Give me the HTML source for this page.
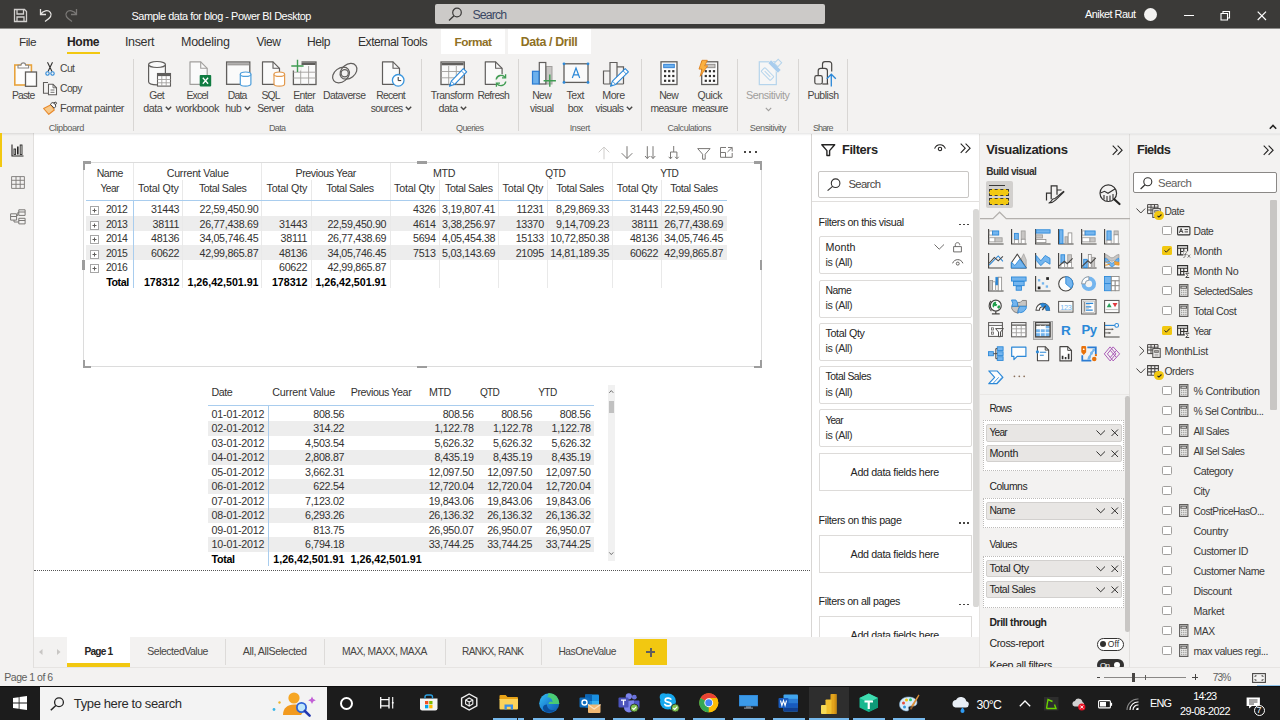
<!DOCTYPE html>
<html lang="en"><head><meta charset="utf-8"><title>Sample data for blog - Power BI Desktop</title>
<style>
html,body{margin:0;padding:0;width:1280px;height:720px;overflow:hidden;background:#fff;}
body{font-family:"Liberation Sans",sans-serif;font-size:11px;color:#252423;position:relative;}
.t{position:absolute;white-space:nowrap;line-height:20px;height:20px;}
.r{position:absolute;box-sizing:border-box;}
svg.r{overflow:visible;}
</style></head><body>
<!-- sec_base -->
<div class="r" style="left:0px;top:133px;width:34px;height:535px;background:#f3f2f1;border-right:1px solid #e1dfdd;"></div>
<div class="r" style="left:0px;top:133px;width:2.2px;height:33.5px;background:#f2c811;"></div>
<svg class="r" style="left:11px;top:143.5px;" width="13" height="13" viewBox="0 0 13 13"><path d="M1 0.5v11.5h11.5" fill="none" stroke="#252423" stroke-width="1.1"/><rect x="3" y="5" width="1.6" height="5.5" fill="none" stroke="#252423" stroke-width="0.9"/><rect x="6" y="2.5" width="1.6" height="8" fill="#252423"/><rect x="9.2" y="1" width="1.8" height="9.5" fill="none" stroke="#252423" stroke-width="0.9"/></svg>
<svg class="r" style="left:11px;top:176px;" width="14" height="13" viewBox="0 0 14 13"><path d="M0.6 0.6h12.8v11.8h-12.8z M0.6 4.3h12.8 M0.6 8.3h12.8 M5 0.6v11.8 M9.2 0.6v11.8" fill="none" stroke="#7a7876" stroke-width="0.9"/></svg>
<svg class="r" style="left:10px;top:208.5px;" width="16" height="16" viewBox="0 0 16 16"><path d="M0.600 4.800h6v6.300h-6z M0.600 7.500h6 M8.800 0.800h6.300v5.600h-6.300z M8.800 3h6.300 M8.800 9.300h6.300v5.600h-6.300z M8.800 11.500h6.300 M6.600 6.500h1.200v-3h1 M4 11.100v1.900h4.800" fill="none" stroke="#7a7876" stroke-width="1"/></svg>
<div class="r" style="left:34px;top:637px;width:777px;height:31px;background:#f3f2f1;"></div>
<div class="r" style="left:0px;top:668px;width:1280px;height:18px;background:#f3f2f1;"></div>
<!-- sec_canvas -->
<div class="r" style="left:83px;top:161.5px;width:678.5px;height:205.5px;border:1px solid #dcdcdc;"></div>
<div class="r" style="left:82.5px;top:161px;width:8.5px;height:2.5px;background:#9d9d9d;"></div>
<div class="r" style="left:82.5px;top:161px;width:2.5px;height:8.5px;background:#9d9d9d;"></div>
<div class="r" style="left:753.5px;top:161px;width:8.5px;height:2.5px;background:#9d9d9d;"></div>
<div class="r" style="left:759.5px;top:161px;width:2.5px;height:8.5px;background:#9d9d9d;"></div>
<div class="r" style="left:82.5px;top:365.5px;width:8.5px;height:2.5px;background:#9d9d9d;"></div>
<div class="r" style="left:82.5px;top:359.5px;width:2.5px;height:8.5px;background:#9d9d9d;"></div>
<div class="r" style="left:753.5px;top:365.5px;width:8.5px;height:2.5px;background:#9d9d9d;"></div>
<div class="r" style="left:759.5px;top:359.5px;width:2.5px;height:8.5px;background:#9d9d9d;"></div>
<div class="r" style="left:417px;top:161px;width:10px;height:2.5px;background:#9d9d9d;"></div>
<div class="r" style="left:417px;top:365.5px;width:10px;height:2.5px;background:#9d9d9d;"></div>
<div class="r" style="left:82.3px;top:259.5px;width:2.5px;height:10px;background:#9d9d9d;"></div>
<div class="r" style="left:759.5px;top:259.5px;width:2.5px;height:10px;background:#9d9d9d;"></div>
<svg class="r" style="left:597.5px;top:146px;" width="12" height="13.5" viewBox="0 0 12 13.5"><path d="M6 13.300v-12.300 M0.700 6.300L6 1L11.300 6.300" fill="none" stroke="#cfcdcb" stroke-width="1"/></svg>
<svg class="r" style="left:620.8px;top:146px;" width="12" height="13.5" viewBox="0 0 12 13.5"><path d="M6 0.200v12.300 M0.700 7.200L6 12.500L11.300 7.200" fill="none" stroke="#7a7876" stroke-width="1"/></svg>
<svg class="r" style="left:644px;top:146px;" width="12" height="13.5" viewBox="0 0 12 13.5"><path d="M3.300 0.200v12.300 M1 10L3.300 12.500L5.600 10 M9 0.200v12.300 M6.700 10L9 12.500L11.300 10" fill="none" stroke="#7a7876" stroke-width="1"/></svg>
<svg class="r" style="left:667.5px;top:146px;" width="11.5" height="13.5" viewBox="0 0 11.5 13.5"><path d="M5.700 0v6 M2.500 12.500v-6.500h6.400v6.500 M0.700 10.800L2.500 12.800L4.300 10.800 M7.100 10.800L8.900 12.800L10.700 10.800" fill="none" stroke="#7a7876" stroke-width="1"/></svg>
<svg class="r" style="left:696.5px;top:147.5px;" width="14" height="12" viewBox="0 0 14 12"><path d="M0.700 0.600h12.400L8.200 6.200v5h-2.600V6.200z" fill="none" stroke="#7a7876" stroke-width="1"/></svg>
<svg class="r" style="left:720.3px;top:147.4px;" width="13" height="10.8" viewBox="0 0 13 10.8"><path d="M6 0.500h-5.500v9.800h11.700v-4.300 M8 0.500h4.200v4 M12.200 0.500L7.500 5 M0.500 5.500h5v4.800" fill="none" stroke="#7a7876" stroke-width="1"/></svg>
<div class="r" style="left:743.8px;top:150.8px;width:2px;height:2px;background:#484644;"></div>
<div class="r" style="left:749.4px;top:150.8px;width:2px;height:2px;background:#484644;"></div>
<div class="r" style="left:755px;top:150.8px;width:2px;height:2px;background:#484644;"></div>
<div class="r" style="left:86px;top:216px;width:640.5px;height:14.5px;background:#ededed;"></div>
<div class="r" style="left:86px;top:245px;width:640.5px;height:14.5px;background:#ededed;"></div>
<div class="r" style="left:132.8px;top:163px;width:1px;height:125px;background:#e9e9e9;"></div>
<div class="r" style="left:182.2px;top:180px;width:1px;height:108px;background:#e9e9e9;"></div>
<div class="r" style="left:260.5px;top:163px;width:1px;height:125px;background:#e9e9e9;"></div>
<div class="r" style="left:310.8px;top:180px;width:1px;height:108px;background:#e9e9e9;"></div>
<div class="r" style="left:389.9px;top:163px;width:1px;height:125px;background:#e9e9e9;"></div>
<div class="r" style="left:438.5px;top:180px;width:1px;height:108px;background:#e9e9e9;"></div>
<div class="r" style="left:497.9px;top:163px;width:1px;height:125px;background:#e9e9e9;"></div>
<div class="r" style="left:546.9px;top:180px;width:1px;height:108px;background:#e9e9e9;"></div>
<div class="r" style="left:611.5px;top:163px;width:1px;height:125px;background:#e9e9e9;"></div>
<div class="r" style="left:661.2px;top:180px;width:1px;height:108px;background:#e9e9e9;"></div>
<div class="r" style="left:86px;top:200px;width:640.5px;height:1px;background:#a9cdee;"></div>
<div class="r" style="left:132.8px;top:200px;width:1.2px;height:88px;background:#a9cdee;"></div>
<div class="t" style="left:96.7px;top:163px;font-size:10.5px;letter-spacing:-0.47px;color:#333231;">Name</div>
<div class="t" style="left:100.6px;top:179px;font-size:10.1px;letter-spacing:-0.54px;color:#333231;">Year</div>
<div class="t" style="left:166.7px;top:163px;font-size:10.7px;letter-spacing:-0.25px;color:#333231;">Current Value</div>
<div class="t" style="left:138.1px;top:178px;font-size:10.7px;letter-spacing:-0.18px;color:#333231;">Total Qty</div>
<div class="t" style="left:198.9px;top:178px;font-size:10.7px;letter-spacing:-0.44px;color:#333231;">Total Sales</div>
<div class="t" style="left:295.5px;top:163px;font-size:10.7px;letter-spacing:-0.42px;color:#333231;">Previous Year</div>
<div class="t" style="left:266.6px;top:178px;font-size:10.7px;letter-spacing:-0.18px;color:#333231;">Total Qty</div>
<div class="t" style="left:326.2px;top:178px;font-size:10.7px;letter-spacing:-0.44px;color:#333231;">Total Sales</div>
<div class="t" style="left:433.1px;top:163px;font-size:10.7px;letter-spacing:-0.39px;color:#333231;">MTD</div>
<div class="t" style="left:394.0px;top:178px;font-size:10.7px;letter-spacing:-0.18px;color:#333231;">Total Qty</div>
<div class="t" style="left:445.1px;top:178px;font-size:10.7px;letter-spacing:-0.44px;color:#333231;">Total Sales</div>
<div class="t" style="left:545.2px;top:164px;font-size:10.1px;letter-spacing:-0.41px;color:#333231;">QTD</div>
<div class="t" style="left:502.6px;top:178px;font-size:10.7px;letter-spacing:-0.18px;color:#333231;">Total Qty</div>
<div class="t" style="left:556.2px;top:178px;font-size:10.7px;letter-spacing:-0.44px;color:#333231;">Total Sales</div>
<div class="t" style="left:660.2px;top:164px;font-size:10.1px;letter-spacing:-0.85px;color:#333231;">YTD</div>
<div class="t" style="left:616.8px;top:178px;font-size:10.7px;letter-spacing:-0.18px;color:#333231;">Total Qty</div>
<div class="t" style="left:670.3px;top:178px;font-size:10.7px;letter-spacing:-0.44px;color:#333231;">Total Sales</div>
<div class="t" style="left:106.0px;top:200px;font-size:10.4px;letter-spacing:-0.44px;color:#333231;">2012</div>
<svg class="r" style="left:90px;top:206px;" width="9" height="9" viewBox="0 0 9 9"><rect x="0.5" y="0.5" width="8" height="8" fill="#fff" stroke="#a6a6a6" stroke-width="1"/><path d="M2.5 4.5h4 M4.5 2.5v4" stroke="#605e5c" stroke-width="1" fill="none"/></svg>
<div class="t" style="left:151.0px;top:199px;font-size:10.7px;letter-spacing:-0.30px;color:#333231;">31443</div>
<div class="t" style="left:199.5px;top:199px;font-size:10.7px;letter-spacing:-0.30px;color:#333231;">22,59,450.90</div>
<div class="t" style="left:413.0px;top:199px;font-size:10.7px;letter-spacing:-0.30px;color:#333231;">4326</div>
<div class="t" style="left:442.1px;top:199px;font-size:10.7px;letter-spacing:-0.30px;color:#333231;">3,19,807.41</div>
<div class="t" style="left:516.5px;top:199px;font-size:10.7px;letter-spacing:-0.30px;color:#333231;">11231</div>
<div class="t" style="left:556.0px;top:199px;font-size:10.7px;letter-spacing:-0.30px;color:#333231;">8,29,869.33</div>
<div class="t" style="left:629.9px;top:199px;font-size:10.7px;letter-spacing:-0.30px;color:#333231;">31443</div>
<div class="t" style="left:664.3px;top:199px;font-size:10.7px;letter-spacing:-0.30px;color:#333231;">22,59,450.90</div>
<div class="t" style="left:106.0px;top:215px;font-size:10.4px;letter-spacing:-0.44px;color:#333231;">2013</div>
<svg class="r" style="left:90px;top:220.5px;" width="9" height="9" viewBox="0 0 9 9"><rect x="0.5" y="0.5" width="8" height="8" fill="#fff" stroke="#a6a6a6" stroke-width="1"/><path d="M2.5 4.5h4 M4.5 2.5v4" stroke="#605e5c" stroke-width="1" fill="none"/></svg>
<div class="t" style="left:152.6px;top:214px;font-size:10.7px;letter-spacing:-0.30px;color:#333231;">38111</div>
<div class="t" style="left:199.5px;top:214px;font-size:10.7px;letter-spacing:-0.30px;color:#333231;">26,77,438.69</div>
<div class="t" style="left:279.0px;top:214px;font-size:10.7px;letter-spacing:-0.30px;color:#333231;">31443</div>
<div class="t" style="left:327.4px;top:214px;font-size:10.7px;letter-spacing:-0.30px;color:#333231;">22,59,450.90</div>
<div class="t" style="left:413.0px;top:214px;font-size:10.7px;letter-spacing:-0.30px;color:#333231;">4614</div>
<div class="t" style="left:442.1px;top:214px;font-size:10.7px;letter-spacing:-0.30px;color:#333231;">3,38,256.97</div>
<div class="t" style="left:515.7px;top:214px;font-size:10.7px;letter-spacing:-0.30px;color:#333231;">13370</div>
<div class="t" style="left:556.0px;top:214px;font-size:10.7px;letter-spacing:-0.30px;color:#333231;">9,14,709.23</div>
<div class="t" style="left:631.5px;top:214px;font-size:10.7px;letter-spacing:-0.30px;color:#333231;">38111</div>
<div class="t" style="left:664.3px;top:214px;font-size:10.7px;letter-spacing:-0.30px;color:#333231;">26,77,438.69</div>
<div class="t" style="left:106.0px;top:229px;font-size:10.4px;letter-spacing:-0.44px;color:#333231;">2014</div>
<svg class="r" style="left:90px;top:235px;" width="9" height="9" viewBox="0 0 9 9"><rect x="0.5" y="0.5" width="8" height="8" fill="#fff" stroke="#a6a6a6" stroke-width="1"/><path d="M2.5 4.5h4 M4.5 2.5v4" stroke="#605e5c" stroke-width="1" fill="none"/></svg>
<div class="t" style="left:151.0px;top:228px;font-size:10.7px;letter-spacing:-0.30px;color:#333231;">48136</div>
<div class="t" style="left:199.5px;top:228px;font-size:10.7px;letter-spacing:-0.30px;color:#333231;">34,05,746.45</div>
<div class="t" style="left:280.6px;top:228px;font-size:10.7px;letter-spacing:-0.30px;color:#333231;">38111</div>
<div class="t" style="left:327.4px;top:228px;font-size:10.7px;letter-spacing:-0.30px;color:#333231;">26,77,438.69</div>
<div class="t" style="left:413.0px;top:228px;font-size:10.7px;letter-spacing:-0.30px;color:#333231;">5694</div>
<div class="t" style="left:442.1px;top:228px;font-size:10.7px;letter-spacing:-0.30px;color:#333231;">4,05,454.38</div>
<div class="t" style="left:515.7px;top:228px;font-size:10.7px;letter-spacing:-0.30px;color:#333231;">15133</div>
<div class="t" style="left:550.3px;top:228px;font-size:10.7px;letter-spacing:-0.30px;color:#333231;">10,72,850.38</div>
<div class="t" style="left:629.9px;top:228px;font-size:10.7px;letter-spacing:-0.30px;color:#333231;">48136</div>
<div class="t" style="left:664.3px;top:228px;font-size:10.7px;letter-spacing:-0.30px;color:#333231;">34,05,746.45</div>
<div class="t" style="left:106.0px;top:244px;font-size:10.4px;letter-spacing:-0.44px;color:#333231;">2015</div>
<svg class="r" style="left:90px;top:249.5px;" width="9" height="9" viewBox="0 0 9 9"><rect x="0.5" y="0.5" width="8" height="8" fill="#fff" stroke="#a6a6a6" stroke-width="1"/><path d="M2.5 4.5h4 M4.5 2.5v4" stroke="#605e5c" stroke-width="1" fill="none"/></svg>
<div class="t" style="left:151.0px;top:243px;font-size:10.7px;letter-spacing:-0.30px;color:#333231;">60622</div>
<div class="t" style="left:199.5px;top:243px;font-size:10.7px;letter-spacing:-0.30px;color:#333231;">42,99,865.87</div>
<div class="t" style="left:279.0px;top:243px;font-size:10.7px;letter-spacing:-0.30px;color:#333231;">48136</div>
<div class="t" style="left:327.4px;top:243px;font-size:10.7px;letter-spacing:-0.30px;color:#333231;">34,05,746.45</div>
<div class="t" style="left:413.0px;top:243px;font-size:10.7px;letter-spacing:-0.30px;color:#333231;">7513</div>
<div class="t" style="left:442.1px;top:243px;font-size:10.7px;letter-spacing:-0.30px;color:#333231;">5,03,143.69</div>
<div class="t" style="left:515.7px;top:243px;font-size:10.7px;letter-spacing:-0.30px;color:#333231;">21095</div>
<div class="t" style="left:550.3px;top:243px;font-size:10.7px;letter-spacing:-0.30px;color:#333231;">14,81,189.35</div>
<div class="t" style="left:629.9px;top:243px;font-size:10.7px;letter-spacing:-0.30px;color:#333231;">60622</div>
<div class="t" style="left:664.3px;top:243px;font-size:10.7px;letter-spacing:-0.30px;color:#333231;">42,99,865.87</div>
<div class="t" style="left:106.0px;top:258px;font-size:10.4px;letter-spacing:-0.44px;color:#333231;">2016</div>
<svg class="r" style="left:90px;top:264.1px;" width="9" height="9" viewBox="0 0 9 9"><rect x="0.5" y="0.5" width="8" height="8" fill="#fff" stroke="#a6a6a6" stroke-width="1"/><path d="M2.5 4.5h4 M4.5 2.5v4" stroke="#605e5c" stroke-width="1" fill="none"/></svg>
<div class="t" style="left:279.0px;top:257px;font-size:10.7px;letter-spacing:-0.30px;color:#333231;">60622</div>
<div class="t" style="left:327.4px;top:257px;font-size:10.7px;letter-spacing:-0.30px;color:#333231;">42,99,865.87</div>
<div class="t" style="left:106.2px;top:272px;font-size:10.7px;letter-spacing:-0.42px;font-weight:700;color:#000;">Total</div>
<div class="t" style="left:143.9px;top:272px;font-size:10.7px;letter-spacing:-0.02px;font-weight:700;color:#000;">178312</div>
<div class="t" style="left:187.5px;top:272px;font-size:10.7px;letter-spacing:-0.02px;font-weight:700;color:#000;">1,26,42,501.91</div>
<div class="t" style="left:271.9px;top:272px;font-size:10.7px;letter-spacing:-0.02px;font-weight:700;color:#000;">178312</div>
<div class="t" style="left:315.4px;top:272px;font-size:10.7px;letter-spacing:-0.02px;font-weight:700;color:#000;">1,26,42,501.91</div>
<div class="r" style="left:208px;top:421px;width:386.3px;height:14.5px;background:#ededed;"></div>
<div class="r" style="left:208px;top:450px;width:386.3px;height:14.5px;background:#ededed;"></div>
<div class="r" style="left:208px;top:479px;width:386.3px;height:14.5px;background:#ededed;"></div>
<div class="r" style="left:208px;top:508px;width:386.3px;height:14.5px;background:#ededed;"></div>
<div class="r" style="left:208px;top:537px;width:386.3px;height:14.5px;background:#ededed;"></div>
<div class="r" style="left:208px;top:404.5px;width:386.3px;height:1px;background:#a9cdee;"></div>
<div class="r" style="left:268.2px;top:404.5px;width:1.3px;height:161.5px;background:#a9cdee;"></div>
<div class="t" style="left:211.6px;top:382px;font-size:10.7px;letter-spacing:-0.47px;color:#333231;">Date</div>
<div class="t" style="left:272.3px;top:382px;font-size:10.7px;letter-spacing:-0.19px;color:#333231;">Current Value</div>
<div class="t" style="left:350.7px;top:382px;font-size:10.7px;letter-spacing:-0.41px;color:#333231;">Previous Year</div>
<div class="t" style="left:429.0px;top:382px;font-size:10.7px;letter-spacing:-0.44px;color:#333231;">MTD</div>
<div class="t" style="left:480.0px;top:383px;font-size:10.1px;letter-spacing:-0.76px;color:#333231;">QTD</div>
<div class="t" style="left:538.2px;top:383px;font-size:10.1px;letter-spacing:-0.55px;color:#333231;">YTD</div>
<div class="t" style="left:211.6px;top:404px;font-size:10.7px;letter-spacing:-0.21px;color:#333231;">01-01-2012</div>
<div class="t" style="left:313.3px;top:404px;font-size:10.7px;letter-spacing:-0.30px;color:#333231;">808.56</div>
<div class="t" style="left:442.7px;top:404px;font-size:10.7px;letter-spacing:-0.30px;color:#333231;">808.56</div>
<div class="t" style="left:501.2px;top:404px;font-size:10.7px;letter-spacing:-0.30px;color:#333231;">808.56</div>
<div class="t" style="left:559.8px;top:404px;font-size:10.7px;letter-spacing:-0.30px;color:#333231;">808.56</div>
<div class="t" style="left:211.6px;top:418px;font-size:10.7px;letter-spacing:-0.21px;color:#333231;">02-01-2012</div>
<div class="t" style="left:313.3px;top:418px;font-size:10.7px;letter-spacing:-0.30px;color:#333231;">314.22</div>
<div class="t" style="left:434.4px;top:418px;font-size:10.7px;letter-spacing:-0.30px;color:#333231;">1,122.78</div>
<div class="t" style="left:492.9px;top:418px;font-size:10.7px;letter-spacing:-0.30px;color:#333231;">1,122.78</div>
<div class="t" style="left:551.5px;top:418px;font-size:10.7px;letter-spacing:-0.30px;color:#333231;">1,122.78</div>
<div class="t" style="left:211.6px;top:433px;font-size:10.7px;letter-spacing:-0.21px;color:#333231;">03-01-2012</div>
<div class="t" style="left:305.0px;top:433px;font-size:10.7px;letter-spacing:-0.30px;color:#333231;">4,503.54</div>
<div class="t" style="left:434.4px;top:433px;font-size:10.7px;letter-spacing:-0.30px;color:#333231;">5,626.32</div>
<div class="t" style="left:492.9px;top:433px;font-size:10.7px;letter-spacing:-0.30px;color:#333231;">5,626.32</div>
<div class="t" style="left:551.5px;top:433px;font-size:10.7px;letter-spacing:-0.30px;color:#333231;">5,626.32</div>
<div class="t" style="left:211.6px;top:447px;font-size:10.7px;letter-spacing:-0.21px;color:#333231;">04-01-2012</div>
<div class="t" style="left:305.0px;top:447px;font-size:10.7px;letter-spacing:-0.30px;color:#333231;">2,808.87</div>
<div class="t" style="left:434.4px;top:447px;font-size:10.7px;letter-spacing:-0.30px;color:#333231;">8,435.19</div>
<div class="t" style="left:492.9px;top:447px;font-size:10.7px;letter-spacing:-0.30px;color:#333231;">8,435.19</div>
<div class="t" style="left:551.5px;top:447px;font-size:10.7px;letter-spacing:-0.30px;color:#333231;">8,435.19</div>
<div class="t" style="left:211.6px;top:462px;font-size:10.7px;letter-spacing:-0.21px;color:#333231;">05-01-2012</div>
<div class="t" style="left:305.0px;top:462px;font-size:10.7px;letter-spacing:-0.30px;color:#333231;">3,662.31</div>
<div class="t" style="left:428.7px;top:462px;font-size:10.7px;letter-spacing:-0.30px;color:#333231;">12,097.50</div>
<div class="t" style="left:487.2px;top:462px;font-size:10.7px;letter-spacing:-0.30px;color:#333231;">12,097.50</div>
<div class="t" style="left:545.8px;top:462px;font-size:10.7px;letter-spacing:-0.30px;color:#333231;">12,097.50</div>
<div class="t" style="left:211.6px;top:476px;font-size:10.7px;letter-spacing:-0.21px;color:#333231;">06-01-2012</div>
<div class="t" style="left:313.3px;top:476px;font-size:10.7px;letter-spacing:-0.30px;color:#333231;">622.54</div>
<div class="t" style="left:428.7px;top:476px;font-size:10.7px;letter-spacing:-0.30px;color:#333231;">12,720.04</div>
<div class="t" style="left:487.2px;top:476px;font-size:10.7px;letter-spacing:-0.30px;color:#333231;">12,720.04</div>
<div class="t" style="left:545.8px;top:476px;font-size:10.7px;letter-spacing:-0.30px;color:#333231;">12,720.04</div>
<div class="t" style="left:211.6px;top:491px;font-size:10.7px;letter-spacing:-0.21px;color:#333231;">07-01-2012</div>
<div class="t" style="left:305.0px;top:491px;font-size:10.7px;letter-spacing:-0.30px;color:#333231;">7,123.02</div>
<div class="t" style="left:428.7px;top:491px;font-size:10.7px;letter-spacing:-0.30px;color:#333231;">19,843.06</div>
<div class="t" style="left:487.2px;top:491px;font-size:10.7px;letter-spacing:-0.30px;color:#333231;">19,843.06</div>
<div class="t" style="left:545.8px;top:491px;font-size:10.7px;letter-spacing:-0.30px;color:#333231;">19,843.06</div>
<div class="t" style="left:211.6px;top:505px;font-size:10.7px;letter-spacing:-0.21px;color:#333231;">08-01-2012</div>
<div class="t" style="left:305.0px;top:505px;font-size:10.7px;letter-spacing:-0.30px;color:#333231;">6,293.26</div>
<div class="t" style="left:428.7px;top:505px;font-size:10.7px;letter-spacing:-0.30px;color:#333231;">26,136.32</div>
<div class="t" style="left:487.2px;top:505px;font-size:10.7px;letter-spacing:-0.30px;color:#333231;">26,136.32</div>
<div class="t" style="left:545.8px;top:505px;font-size:10.7px;letter-spacing:-0.30px;color:#333231;">26,136.32</div>
<div class="t" style="left:211.6px;top:520px;font-size:10.7px;letter-spacing:-0.21px;color:#333231;">09-01-2012</div>
<div class="t" style="left:313.3px;top:520px;font-size:10.7px;letter-spacing:-0.30px;color:#333231;">813.75</div>
<div class="t" style="left:428.7px;top:520px;font-size:10.7px;letter-spacing:-0.30px;color:#333231;">26,950.07</div>
<div class="t" style="left:487.2px;top:520px;font-size:10.7px;letter-spacing:-0.30px;color:#333231;">26,950.07</div>
<div class="t" style="left:545.8px;top:520px;font-size:10.7px;letter-spacing:-0.30px;color:#333231;">26,950.07</div>
<div class="t" style="left:211.6px;top:534px;font-size:10.7px;letter-spacing:-0.21px;color:#333231;">10-01-2012</div>
<div class="t" style="left:305.0px;top:534px;font-size:10.7px;letter-spacing:-0.30px;color:#333231;">6,794.18</div>
<div class="t" style="left:428.7px;top:534px;font-size:10.7px;letter-spacing:-0.30px;color:#333231;">33,744.25</div>
<div class="t" style="left:487.2px;top:534px;font-size:10.7px;letter-spacing:-0.30px;color:#333231;">33,744.25</div>
<div class="t" style="left:545.8px;top:534px;font-size:10.7px;letter-spacing:-0.30px;color:#333231;">33,744.25</div>
<div class="t" style="left:211.6px;top:549px;font-size:10.7px;letter-spacing:-0.34px;font-weight:700;color:#000;">Total</div>
<div class="t" style="left:273.3px;top:549px;font-size:10.7px;letter-spacing:-0.02px;font-weight:700;color:#000;">1,26,42,501.91</div>
<div class="t" style="left:350.6px;top:549px;font-size:10.7px;letter-spacing:-0.02px;font-weight:700;color:#000;">1,26,42,501.91</div>
<div class="r" style="left:608.3px;top:384.5px;width:6.5px;height:176px;background:#f1f1f1;"></div>
<div class="r" style="left:608.8px;top:400.5px;width:5.5px;height:12px;background:#c1c1c1;"></div>
<svg class="r" style="left:609.3px;top:389.5px;" width="4.6" height="3.2" viewBox="0 0 4.6 3.2"><path d="M0.3 2.8L2.3 0.6L4.3 2.8" fill="none" stroke="#606060" stroke-width="0.9"/></svg>
<svg class="r" style="left:609.3px;top:551.5px;" width="4.6" height="3.2" viewBox="0 0 4.6 3.2"><path d="M0.3 0.4L2.3 2.6L4.3 0.4" fill="none" stroke="#606060" stroke-width="0.9"/></svg>
<div class="r" style="left:34px;top:570px;width:776px;height:1px;border-top:1px dotted #555;"></div>
<!-- sec_filters -->
<div class="r" style="left:811px;top:636.6px;width:168px;height:32px;background:#f3f2f1;"></div>
<div class="r" style="left:811px;top:134px;width:1px;height:502.6px;background:#d8d6d4;"></div>
<svg class="r" style="left:821px;top:143.5px;" width="14.5" height="12" viewBox="0 0 14.5 12"><path d="M0.8 0.8h12.9L8.6 6.6v4.9h-2.7V6.6z" fill="none" stroke="#252423" stroke-width="1.4" stroke-linejoin="round"/></svg>
<div class="t" style="left:842.0px;top:140px;font-size:12.8px;letter-spacing:-0.40px;font-weight:700;color:#252423;">Filters</div>
<svg class="r" style="left:934px;top:143.5px;" width="12" height="7.5" viewBox="0 0 12 7.5"><path d="M0.6 4.6C2.5 -0.6 9.5 -0.6 11.4 4.6" fill="none" stroke="#252423" stroke-width="1.1"/><circle cx="6" cy="5" r="1.7" fill="none" stroke="#252423" stroke-width="1.1"/></svg>
<svg class="r" style="left:959.5px;top:143px;" width="11" height="10.5" viewBox="0 0 11 10.5"><path d="M0.7 0.7L5.2 5.2L0.7 9.8 M5.6 0.7L10.1 5.2L5.6 9.8" fill="none" stroke="#252423" stroke-width="1.1"/></svg>
<div class="r" style="left:818.3px;top:171.3px;width:151px;height:26.3px;background:#fff;border:1px solid #c8c6c4;border-radius:2px;"></div>
<svg class="r" style="left:827px;top:178px;" width="14" height="13" viewBox="0 0 14 13"><circle cx="8.6" cy="5.2" r="4.3" fill="none" stroke="#323130" stroke-width="1.1"/><path d="M5.6 8.4L0.6 12.6" stroke="#323130" stroke-width="1.2" fill="none"/></svg>
<div class="t" style="left:848.4px;top:174px;font-size:11.3px;letter-spacing:-0.64px;color:#484644;">Search</div>
<div class="r" style="left:812px;top:201px;width:167px;height:1px;background:#e1dfdd;"></div>
<div class="r" style="left:973.4px;top:208.5px;width:5.2px;height:398.5px;background:#d9d8d6;border-radius:2.6px;"></div>
<div class="t" style="left:818.6px;top:212px;font-size:10.7px;letter-spacing:-0.39px;color:#252423;">Filters on this visual</div>
<div class="r" style="left:959px;top:223.5px;width:1.5px;height:1.5px;background:#484644;"></div>
<div class="r" style="left:963px;top:223.5px;width:1.5px;height:1.5px;background:#484644;"></div>
<div class="r" style="left:967px;top:223.5px;width:1.5px;height:1.5px;background:#484644;"></div>
<div class="r" style="left:818.7px;top:236.3px;width:153px;height:38px;background:#fff;border:1px solid #dddbd9;border-radius:2px;"></div>
<div class="t" style="left:825.5px;top:237px;font-size:10.7px;letter-spacing:0.07px;color:#252423;">Month</div>
<div class="t" style="left:825.5px;top:252px;font-size:10.7px;letter-spacing:-0.39px;color:#323130;">is (All)</div>
<div class="r" style="left:818.7px;top:279.5px;width:153px;height:38px;background:#fff;border:1px solid #dddbd9;border-radius:2px;"></div>
<div class="t" style="left:825.5px;top:281px;font-size:10.4px;letter-spacing:-0.48px;color:#252423;">Name</div>
<div class="t" style="left:825.5px;top:295px;font-size:10.7px;letter-spacing:-0.39px;color:#323130;">is (All)</div>
<div class="r" style="left:818.7px;top:322.7px;width:153px;height:38px;background:#fff;border:1px solid #dddbd9;border-radius:2px;"></div>
<div class="t" style="left:825.5px;top:323px;font-size:10.7px;letter-spacing:-0.34px;color:#252423;">Total Qty</div>
<div class="t" style="left:825.5px;top:338px;font-size:10.7px;letter-spacing:-0.39px;color:#323130;">is (All)</div>
<div class="r" style="left:818.7px;top:365.9px;width:153px;height:38px;background:#fff;border:1px solid #dddbd9;border-radius:2px;"></div>
<div class="t" style="left:825.5px;top:367px;font-size:10.4px;letter-spacing:-0.49px;color:#252423;">Total Sales</div>
<div class="t" style="left:825.5px;top:382px;font-size:10.7px;letter-spacing:-0.39px;color:#323130;">is (All)</div>
<div class="r" style="left:818.7px;top:409.1px;width:153px;height:38px;background:#fff;border:1px solid #dddbd9;border-radius:2px;"></div>
<div class="t" style="left:825.5px;top:411px;font-size:10.1px;letter-spacing:-0.80px;color:#252423;">Year</div>
<div class="t" style="left:825.5px;top:425px;font-size:10.7px;letter-spacing:-0.39px;color:#323130;">is (All)</div>
<svg class="r" style="left:934px;top:244.3px;" width="10.5" height="6" viewBox="0 0 10.5 6"><path d="M0.5 0.5L5.2 5.2L10 0.5" fill="none" stroke="#605e5c" stroke-width="0.900"/></svg>
<svg class="r" style="left:953px;top:241.5px;" width="9" height="10.5" viewBox="0 0 9 10.5"><path d="M0.6 4.6h7.8v5.3h-7.8z M2.3 4.6v-2c0-2.6 4.4-2.6 4.4 0v0.6" fill="none" stroke="#605e5c" stroke-width="0.900"/></svg>
<svg class="r" style="left:952px;top:259.3px;" width="11.5" height="6.8" viewBox="0 0 11.5 6.8"><path d="M0.6 4.3C2.3 -0.6 9.2 -0.6 10.9 4.3" fill="none" stroke="#605e5c" stroke-width="1"/><circle cx="5.75" cy="4.6" r="1.5" fill="none" stroke="#605e5c" stroke-width="1"/></svg>
<div class="r" style="left:818.7px;top:453px;width:153px;height:38px;background:#fff;border:1px solid #dddbd9;"></div>
<div class="t" style="left:850.6px;top:462px;font-size:10.7px;letter-spacing:-0.34px;color:#252423;">Add data fields here</div>
<div class="t" style="left:818.6px;top:510px;font-size:10.7px;letter-spacing:-0.37px;color:#252423;">Filters on this page</div>
<div class="r" style="left:959px;top:522px;width:1.5px;height:1.5px;background:#484644;"></div>
<div class="r" style="left:963px;top:522px;width:1.5px;height:1.5px;background:#484644;"></div>
<div class="r" style="left:967px;top:522px;width:1.5px;height:1.5px;background:#484644;"></div>
<div class="r" style="left:818.7px;top:534.5px;width:153px;height:38px;background:#fff;border:1px solid #dddbd9;"></div>
<div class="t" style="left:850.6px;top:544px;font-size:10.7px;letter-spacing:-0.34px;color:#252423;">Add data fields here</div>
<div class="t" style="left:818.6px;top:591px;font-size:10.7px;letter-spacing:-0.42px;color:#252423;">Filters on all pages</div>
<div class="r" style="left:959px;top:603.5px;width:1.5px;height:1.5px;background:#484644;"></div>
<div class="r" style="left:963px;top:603.5px;width:1.5px;height:1.5px;background:#484644;"></div>
<div class="r" style="left:967px;top:603.5px;width:1.5px;height:1.5px;background:#484644;"></div>
<div class="r" style="left:818.7px;top:615.6px;width:153px;height:21px;background:#fff;border:1px solid #dddbd9;border-bottom:none;"></div>
<div class="r" style="left:818px;top:620px;width:155px;height:16.6px;overflow:hidden;"><div class="t" style="left:32.6px;top:5px;font-size:10.7px;letter-spacing:-0.34px;color:#252423;">Add data fields here</div></div>
<!-- sec_viz -->
<div class="r" style="left:978.7px;top:134px;width:151px;height:534px;background:#f3f2f1;border-left:1px solid #e6e4e2;border-right:1px solid #e1dfdd;"></div>
<div class="t" style="left:986.2px;top:140px;font-size:13.1px;letter-spacing:-0.41px;font-weight:700;color:#252423;">Visualizations</div>
<svg class="r" style="left:1111.5px;top:144.5px;" width="11" height="10.5" viewBox="0 0 11 10.5"><path d="M0.7 0.7L5.2 5.2L0.7 9.8 M5.6 0.7L10.1 5.2L5.6 9.8" fill="none" stroke="#252423" stroke-width="1.1"/></svg>
<div class="t" style="left:986.2px;top:162px;font-size:10.1px;letter-spacing:-0.55px;font-weight:700;color:#323130;">Build visual</div>
<div class="r" style="left:986.1px;top:181.2px;width:26.5px;height:26.7px;background:#d2d0ce;border-radius:2px;"></div>
<div class="r" style="left:989.2px;top:184.5px;width:16px;height:1.2px;background:#3b3a39;"></div>
<div class="r" style="left:989.2px;top:188.5px;width:20.2px;height:7px;background:#f2c811;border:1px dashed #3b3a39;"></div>
<div class="r" style="left:989.2px;top:197.6px;width:20.2px;height:7px;background:#f2c811;border:1px dashed #3b3a39;"></div>
<svg class="r" style="left:1045px;top:185px;" width="21" height="20" viewBox="0 0 21 20"><path d="M1.5 15.5v-7.3h4.700v-7.400h5.800v9 M12 5h4.500" fill="none" stroke="#323130" stroke-width="1.200"/><path d="M6.200 8.200v6" fill="none" stroke="#323130" stroke-width="1.200"/><path d="M19 6.800L10.500 15.200c-1.500 1.500-3.500 2.800-6.500 2.800c1.800-0.800 2.300-1.800 3-3c0.800-1.200 1.800-1.300 2.500-1.200L18.500 6.300z" fill="#f3f2f1" stroke="#323130" stroke-width="1.100" stroke-linejoin="round"/></svg>
<svg class="r" style="left:1098.5px;top:184px;" width="22" height="21" viewBox="0 0 22 21"><circle cx="9.300" cy="9.200" r="8.300" fill="none" stroke="#323130" stroke-width="1.200"/><path d="M15.200 15.200L20.500 20" stroke="#252423" stroke-width="2.200" stroke-linecap="round"/><path d="M1.500 9L5.500 7.300L9 9.300L16.300 4.800" fill="none" stroke="#323130" stroke-width="1.100"/><path d="M5 11v4.500M8 12v5M11 11.500v5.500M14 10v5.500" stroke="#323130" stroke-width="1.100"/></svg>
<svg class="r" style="left:979.5px;top:211px;" width="150" height="9" viewBox="0 0 150 9"><path d="M0 7.7h13L19.6 1.2L26.2 7.7H150" fill="none" stroke="#b3b0ad" stroke-width="1.200"/></svg>
<div class="r" style="left:979.7px;top:394px;width:149.5px;height:1px;background:#e9e7e5;"></div>
<div class="t" style="left:989.4px;top:399px;font-size:10.1px;letter-spacing:-0.85px;color:#252423;">Rows</div>
<div class="r" style="left:982.8px;top:420.4px;width:141px;height:50.6px;background:#ffffff;border:1px dotted #bdbbb9;"></div>
<div class="r" style="left:985.5px;top:423.9px;width:136.2px;height:17.9px;background:#e8e6e4;border:1px solid #d2d0ce;border-radius:2px;"></div>
<div class="t" style="left:989.4px;top:423px;font-size:10.1px;letter-spacing:-0.70px;color:#252423;">Year</div>
<svg class="r" style="left:1096.3px;top:429.9px;" width="9.5" height="5.5" viewBox="0 0 9.5 5.5"><path d="M0.5 0.5L4.7 4.8L9 0.5" fill="none" stroke="#323130" stroke-width="1"/></svg>
<svg class="r" style="left:1110.5px;top:428.9px;" width="7.5" height="7.5" viewBox="0 0 7.5 7.5"><path d="M0.5 0.5L7 7 M7 0.5L0.5 7" fill="none" stroke="#323130" stroke-width="1"/></svg>
<div class="r" style="left:985.5px;top:444.6px;width:136.2px;height:17.9px;background:#e8e6e4;border:1px solid #d2d0ce;border-radius:2px;"></div>
<div class="t" style="left:989.4px;top:443px;font-size:10.7px;letter-spacing:-0.18px;color:#252423;">Month</div>
<svg class="r" style="left:1096.3px;top:450.6px;" width="9.5" height="5.5" viewBox="0 0 9.5 5.5"><path d="M0.5 0.5L4.7 4.8L9 0.5" fill="none" stroke="#323130" stroke-width="1"/></svg>
<svg class="r" style="left:1110.5px;top:449.6px;" width="7.5" height="7.5" viewBox="0 0 7.5 7.5"><path d="M0.5 0.5L7 7 M7 0.5L0.5 7" fill="none" stroke="#323130" stroke-width="1"/></svg>
<div class="t" style="left:989.4px;top:477px;font-size:10.4px;letter-spacing:-0.46px;color:#252423;">Columns</div>
<div class="r" style="left:982.8px;top:498.2px;width:141px;height:30px;background:#ffffff;border:1px dotted #bdbbb9;"></div>
<div class="r" style="left:985.5px;top:502px;width:136.2px;height:17.6px;background:#e8e6e4;border:1px solid #d2d0ce;border-radius:2px;"></div>
<div class="t" style="left:989.4px;top:501px;font-size:10.3px;letter-spacing:-0.49px;color:#252423;">Name</div>
<svg class="r" style="left:1096.3px;top:508px;" width="9.5" height="5.5" viewBox="0 0 9.5 5.5"><path d="M0.5 0.5L4.7 4.8L9 0.5" fill="none" stroke="#323130" stroke-width="1"/></svg>
<svg class="r" style="left:1110.5px;top:507px;" width="7.5" height="7.5" viewBox="0 0 7.5 7.5"><path d="M0.5 0.5L7 7 M7 0.5L0.5 7" fill="none" stroke="#323130" stroke-width="1"/></svg>
<div class="t" style="left:989.4px;top:535px;font-size:10.2px;letter-spacing:-0.49px;color:#252423;">Values</div>
<div class="r" style="left:982.8px;top:556.2px;width:141px;height:51.8px;background:#ffffff;border:1px dotted #bdbbb9;"></div>
<div class="r" style="left:985.5px;top:559.5px;width:136.2px;height:17.9px;background:#e8e6e4;border:1px solid #d2d0ce;border-radius:2px;"></div>
<div class="t" style="left:989.4px;top:558px;font-size:10.7px;letter-spacing:-0.31px;color:#252423;">Total Qty</div>
<svg class="r" style="left:1096.3px;top:565.5px;" width="9.5" height="5.5" viewBox="0 0 9.5 5.5"><path d="M0.5 0.5L4.7 4.8L9 0.5" fill="none" stroke="#323130" stroke-width="1"/></svg>
<svg class="r" style="left:1110.5px;top:564.5px;" width="7.5" height="7.5" viewBox="0 0 7.5 7.5"><path d="M0.5 0.5L7 7 M7 0.5L0.5 7" fill="none" stroke="#323130" stroke-width="1"/></svg>
<div class="r" style="left:985.5px;top:580.5px;width:136.2px;height:17.9px;background:#e8e6e4;border:1px solid #d2d0ce;border-radius:2px;"></div>
<div class="t" style="left:989.4px;top:580px;font-size:10.4px;letter-spacing:-0.46px;color:#252423;">Total Sales</div>
<svg class="r" style="left:1096.3px;top:586.5px;" width="9.5" height="5.5" viewBox="0 0 9.5 5.5"><path d="M0.5 0.5L4.7 4.8L9 0.5" fill="none" stroke="#323130" stroke-width="1"/></svg>
<svg class="r" style="left:1110.5px;top:585.5px;" width="7.5" height="7.5" viewBox="0 0 7.5 7.5"><path d="M0.5 0.5L7 7 M7 0.5L0.5 7" fill="none" stroke="#323130" stroke-width="1"/></svg>
<div class="t" style="left:989.4px;top:613px;font-size:10.4px;letter-spacing:-0.40px;font-weight:700;color:#252423;">Drill through</div>
<div class="t" style="left:989.4px;top:633px;font-size:10.7px;letter-spacing:-0.41px;color:#252423;">Cross-report</div>
<div class="r" style="left:1096.8px;top:638px;width:27px;height:12.8px;background:#fff;border:1px solid #323130;border-radius:6.4px;"></div>
<div class="r" style="left:1100.2px;top:641.4px;width:6px;height:6px;background:#323130;border-radius:50%;"></div>
<div class="t" style="left:1107.7px;top:634px;font-size:8.5px;letter-spacing:0.16px;color:#323130;">Off</div>
<div class="r" style="left:980px;top:655px;width:149px;height:12.6px;overflow:hidden;"><div class="t" style="left:9.4px;top:0px;font-size:10.7px;letter-spacing:-0.28px;color:#252423;">Keep all filters</div><div class="r" style="left:116.8px;top:3.6px;width:27px;height:12.8px;background:#323130;border-radius:6.4px;"></div><div class="t" style="left:120.0px;top:1px;font-size:8px;letter-spacing:-0.67px;color:#fff;">On</div><div class="r" style="left:134.3px;top:7px;width:6px;height:6px;background:#fff;border-radius:50%;"></div></div>
<div class="r" style="left:1125px;top:396px;width:4.6px;height:235.5px;background:#c8c6c4;border-radius:2.3px;"></div>
<!-- sec_fields -->
<div class="r" style="left:1130px;top:134px;width:150px;height:534px;background:#f3f2f1;"></div>
<div class="t" style="left:1137.0px;top:140px;font-size:12.8px;letter-spacing:-0.64px;font-weight:700;color:#252423;">Fields</div>
<svg class="r" style="left:1262.5px;top:144.5px;" width="11" height="10.5" viewBox="0 0 11 10.5"><path d="M0.7 0.7L5.2 5.2L0.7 9.8 M5.6 0.7L10.1 5.2L5.6 9.8" fill="none" stroke="#252423" stroke-width="1.1"/></svg>
<div class="r" style="left:1133.3px;top:172.4px;width:143.7px;height:20.3px;background:#fff;border:1px solid #8a8886;border-radius:2px;"></div>
<svg class="r" style="left:1140px;top:176.5px;" width="12.5" height="12.5" viewBox="0 0 12.5 12.5"><circle cx="7.8" cy="4.8" r="4" fill="none" stroke="#323130" stroke-width="1.1"/><path d="M5 7.8L0.6 12" stroke="#323130" stroke-width="1.2" fill="none"/></svg>
<div class="t" style="left:1158.0px;top:173px;font-size:11.4px;letter-spacing:-0.46px;color:#605e5c;">Search</div>
<div class="r" style="left:1270px;top:200px;width:6.8px;height:210px;background:#c8c6c4;border-radius:1px;"></div>
<svg class="r" style="left:1136.3px;top:208px;" width="10" height="6" viewBox="0 0 10 6"><path d="M0.5 0.5L4.8 5L9.2 0.5" fill="none" stroke="#484644" stroke-width="1"/></svg>
<svg class="r" style="left:1147.3px;top:204.2px;" width="14" height="14" viewBox="0 0 14 14"><path d="M0.600 0.600h10.400v9h-10.400z M0.600 3.200h10.400 M0.600 6h10.400 M4 0.600v9 M7.500 0.600v9" fill="none" stroke="#484644" stroke-width="1"/><rect x="5.800" y="4.600" width="7.400" height="8.800" fill="#f3f2f1" stroke="#484644" stroke-width="1"/><path d="M7.500 6.500h4v2h-4z" fill="#a19f9d" stroke="#605e5c" stroke-width="0.700"/><path d="M7.500 10.300h4M7.500 11.900h4" stroke="#8a8886" stroke-width="0.700"/></svg>
<div class="r" style="left:1154.3px;top:211.1px;width:9.4px;height:9.4px;background:#f2c811;border-radius:50%;"></div>
<svg class="r" style="left:1156.5px;top:214px;" width="5" height="3.6" viewBox="0 0 5 3.6"><path d="M0.500 1.800L1.900 3.100L4.500 0.500" fill="none" stroke="#252423" stroke-width="1.100"/></svg>
<div class="t" style="left:1164.4px;top:202px;font-size:10.2px;letter-spacing:-0.45px;color:#3b3a39;">Date</div>
<div class="r" style="left:1162.3px;top:225.8px;width:9.5px;height:9.5px;background:#fff;border:1px solid #a19f9d;border-radius:1.5px;"></div>
<svg class="r" style="left:1176.8px;top:225.5px;" width="13.5" height="9.5" viewBox="0 0 13.5 9.5"><rect x="0.6" y="0.6" width="12.3" height="8.3" rx="1" fill="none" stroke="#323130" stroke-width="1.1"/><path d="M2.3 6.9L4.1 2.5L5.9 6.9M3 5.4h2.2 M7.6 3.6h3.4 M7.6 5.9h3.4" fill="none" stroke="#323130" stroke-width="0.9"/></svg>
<div class="t" style="left:1193.5px;top:222px;font-size:10.3px;letter-spacing:-0.49px;color:#3b3a39;">Date</div>
<div class="r" style="left:1162.3px;top:245.8px;width:9.5px;height:9.5px;background:#f2c811;border-radius:1.5px;"></div>
<svg class="r" style="left:1164px;top:248.2px;" width="6.4" height="4.8" viewBox="0 0 6.4 4.8"><path d="M0.5 2.4L2.3 4.2L5.9 0.5" fill="none" stroke="#252423" stroke-width="1"/></svg>
<svg class="r" style="left:1177px;top:244.5px;" width="14" height="13" viewBox="0 0 14 13"><path d="M0.6 0.6h10v9.3h-10z M0.6 3.3h10 M3.6 3.3v6.6 M6.8 3.3v6.6 M3.6 6.5h7" fill="none" stroke="#323130" stroke-width="1.1"/><rect x="6.4" y="6.3" width="7" height="6.5" fill="#f3f2f1"/><path d="M6.5 12.5c1.3 0.3 1.5-1 1.7-2.3c0.2-1.6 0.4-2.8 1.8-2.5 M7.2 9.6h2.4 M10.6 9.6l2.6 3 M13.2 9.6l-2.6 3" fill="none" stroke="#605e5c" stroke-width="0.8"/></svg>
<div class="t" style="left:1193.5px;top:241px;font-size:10.7px;letter-spacing:-0.23px;color:#3b3a39;">Month</div>
<div class="r" style="left:1162.3px;top:265.8px;width:9.5px;height:9.5px;background:#fff;border:1px solid #a19f9d;border-radius:1.5px;"></div>
<svg class="r" style="left:1177px;top:264.5px;" width="14" height="13" viewBox="0 0 14 13"><path d="M0.6 0.6h10v9.3h-10z M0.6 3.3h10 M3.6 3.3v6.6 M6.8 3.3v6.6 M3.6 6.5h7" fill="none" stroke="#323130" stroke-width="1.1"/><rect x="7.8" y="7" width="5" height="6" fill="#f3f2f1"/><path d="M12.2 8.2h-3.4l1.9 2.1l-1.9 2.2h3.4" fill="none" stroke="#323130" stroke-width="0.9"/></svg>
<div class="t" style="left:1193.5px;top:261px;font-size:10.7px;letter-spacing:-0.16px;color:#3b3a39;">Month No</div>
<div class="r" style="left:1162.3px;top:285.8px;width:9.5px;height:9.5px;background:#fff;border:1px solid #a19f9d;border-radius:1.5px;"></div>
<svg class="r" style="left:1178.5px;top:283.9px;" width="9.5" height="13" viewBox="0 0 9.5 13"><path d="M0.6 0.6h8.3v11.8h-8.3z M2 2.3h5.5v2h-5.5z" fill="none" stroke="#605e5c" stroke-width="1.1"/><path d="M2.1 6.3h1.2M4.2 6.3h1.2M6.3 6.3h1.2M2.1 8.3h1.2M4.2 8.3h1.2M6.3 8.3h1.2M2.1 10.3h1.2M4.2 10.3h1.2M6.3 10.3h1.2" stroke="#7a7876" stroke-width="1.1"/></svg>
<div class="t" style="left:1193.5px;top:282px;font-size:10.2px;letter-spacing:-0.48px;color:#3b3a39;">SelectedSales</div>
<div class="r" style="left:1162.3px;top:305.8px;width:9.5px;height:9.5px;background:#fff;border:1px solid #a19f9d;border-radius:1.5px;"></div>
<svg class="r" style="left:1178.5px;top:303.9px;" width="9.5" height="13" viewBox="0 0 9.5 13"><path d="M0.6 0.6h8.3v11.8h-8.3z M2 2.3h5.5v2h-5.5z" fill="none" stroke="#605e5c" stroke-width="1.1"/><path d="M2.1 6.3h1.2M4.2 6.3h1.2M6.3 6.3h1.2M2.1 8.3h1.2M4.2 8.3h1.2M6.3 8.3h1.2M2.1 10.3h1.2M4.2 10.3h1.2M6.3 10.3h1.2" stroke="#7a7876" stroke-width="1.1"/></svg>
<div class="t" style="left:1193.5px;top:301px;font-size:10.7px;letter-spacing:-0.49px;color:#3b3a39;">Total Cost</div>
<div class="r" style="left:1162.3px;top:325.8px;width:9.5px;height:9.5px;background:#f2c811;border-radius:1.5px;"></div>
<svg class="r" style="left:1164px;top:328.2px;" width="6.4" height="4.8" viewBox="0 0 6.4 4.8"><path d="M0.5 2.4L2.3 4.2L5.9 0.5" fill="none" stroke="#252423" stroke-width="1"/></svg>
<svg class="r" style="left:1177px;top:324.5px;" width="14" height="13" viewBox="0 0 14 13"><path d="M0.6 0.6h10v9.3h-10z M0.6 3.3h10 M3.6 3.3v6.6 M6.8 3.3v6.6 M3.6 6.5h7" fill="none" stroke="#323130" stroke-width="1.1"/><rect x="7.8" y="7" width="5" height="6" fill="#f3f2f1"/><path d="M12.2 8.2h-3.4l1.9 2.1l-1.9 2.2h3.4" fill="none" stroke="#323130" stroke-width="0.9"/></svg>
<div class="t" style="left:1193.5px;top:322px;font-size:10.1px;letter-spacing:-0.74px;color:#3b3a39;">Year</div>
<svg class="r" style="left:1138.5px;top:345.5px;" width="6" height="10" viewBox="0 0 6 10"><path d="M0.5 0.5L5 4.8L0.5 9.2" fill="none" stroke="#484644" stroke-width="1"/></svg>
<svg class="r" style="left:1147.3px;top:344.2px;" width="14" height="14" viewBox="0 0 14 14"><path d="M0.600 0.600h10.400v9h-10.400z M0.600 3.200h10.400 M0.600 6h10.400 M4 0.600v9 M7.500 0.600v9" fill="none" stroke="#484644" stroke-width="1"/><rect x="5.800" y="4.600" width="7.400" height="8.800" fill="#f3f2f1" stroke="#484644" stroke-width="1"/><path d="M7.500 6.500h4v2h-4z" fill="#a19f9d" stroke="#605e5c" stroke-width="0.700"/><path d="M7.500 10.300h4M7.500 11.900h4" stroke="#8a8886" stroke-width="0.700"/></svg>
<div class="t" style="left:1164.4px;top:341px;font-size:10.7px;letter-spacing:-0.32px;color:#3b3a39;">MonthList</div>
<svg class="r" style="left:1136.3px;top:368px;" width="10" height="6" viewBox="0 0 10 6"><path d="M0.5 0.5L4.8 5L9.2 0.5" fill="none" stroke="#484644" stroke-width="1"/></svg>
<svg class="r" style="left:1147.3px;top:365.1px;" width="14" height="14" viewBox="0 0 14 14"><path d="M0.600 0.600h10.800v9.600h-10.800z M0.600 3.600h10.800 M0.600 6.900h10.800 M4.200 0.600v9.600 M7.800 0.600v9.600" fill="none" stroke="#484644" stroke-width="1.100"/></svg>
<div class="r" style="left:1154.3px;top:371.1px;width:9.4px;height:9.4px;background:#f2c811;border-radius:50%;"></div>
<svg class="r" style="left:1156.5px;top:374px;" width="5" height="3.6" viewBox="0 0 5 3.6"><path d="M0.500 1.800L1.900 3.100L4.500 0.500" fill="none" stroke="#252423" stroke-width="1.100"/></svg>
<div class="t" style="left:1164.4px;top:362px;font-size:10.4px;letter-spacing:-0.46px;color:#3b3a39;">Orders</div>
<div class="r" style="left:1162.3px;top:385.8px;width:9.5px;height:9.5px;background:#fff;border:1px solid #a19f9d;border-radius:1.5px;"></div>
<svg class="r" style="left:1178.5px;top:383.9px;" width="9.5" height="13" viewBox="0 0 9.5 13"><path d="M0.6 0.6h8.3v11.8h-8.3z M2 2.3h5.5v2h-5.5z" fill="none" stroke="#605e5c" stroke-width="1.1"/><path d="M2.1 6.3h1.2M4.2 6.3h1.2M6.3 6.3h1.2M2.1 8.3h1.2M4.2 8.3h1.2M6.3 8.3h1.2M2.1 10.3h1.2M4.2 10.3h1.2M6.3 10.3h1.2" stroke="#7a7876" stroke-width="1.1"/></svg>
<div class="t" style="left:1193.5px;top:381px;font-size:10.7px;letter-spacing:-0.28px;color:#3b3a39;">% Contribution</div>
<div class="r" style="left:1162.3px;top:405.8px;width:9.5px;height:9.5px;background:#fff;border:1px solid #a19f9d;border-radius:1.5px;"></div>
<svg class="r" style="left:1178.5px;top:403.9px;" width="9.5" height="13" viewBox="0 0 9.5 13"><path d="M0.6 0.6h8.3v11.8h-8.3z M2 2.3h5.5v2h-5.5z" fill="none" stroke="#605e5c" stroke-width="1.1"/><path d="M2.1 6.3h1.2M4.2 6.3h1.2M6.3 6.3h1.2M2.1 8.3h1.2M4.2 8.3h1.2M6.3 8.3h1.2M2.1 10.3h1.2M4.2 10.3h1.2M6.3 10.3h1.2" stroke="#7a7876" stroke-width="1.1"/></svg>
<div class="t" style="left:1193.5px;top:402px;font-size:10.4px;letter-spacing:-0.47px;color:#3b3a39;">% Sel Contribu...</div>
<div class="r" style="left:1162.3px;top:425.8px;width:9.5px;height:9.5px;background:#fff;border:1px solid #a19f9d;border-radius:1.5px;"></div>
<svg class="r" style="left:1178.5px;top:423.9px;" width="9.5" height="13" viewBox="0 0 9.5 13"><path d="M0.6 0.6h8.3v11.8h-8.3z M2 2.3h5.5v2h-5.5z" fill="none" stroke="#605e5c" stroke-width="1.1"/><path d="M2.1 6.3h1.2M4.2 6.3h1.2M6.3 6.3h1.2M2.1 8.3h1.2M4.2 8.3h1.2M6.3 8.3h1.2M2.1 10.3h1.2M4.2 10.3h1.2M6.3 10.3h1.2" stroke="#7a7876" stroke-width="1.1"/></svg>
<div class="t" style="left:1193.5px;top:422px;font-size:10.2px;letter-spacing:-0.46px;color:#3b3a39;">All Sales</div>
<div class="r" style="left:1162.3px;top:445.8px;width:9.5px;height:9.5px;background:#fff;border:1px solid #a19f9d;border-radius:1.5px;"></div>
<svg class="r" style="left:1178.5px;top:443.9px;" width="9.5" height="13" viewBox="0 0 9.5 13"><path d="M0.6 0.6h8.3v11.8h-8.3z M2 2.3h5.5v2h-5.5z" fill="none" stroke="#605e5c" stroke-width="1.1"/><path d="M2.1 6.3h1.2M4.2 6.3h1.2M6.3 6.3h1.2M2.1 8.3h1.2M4.2 8.3h1.2M6.3 8.3h1.2M2.1 10.3h1.2M4.2 10.3h1.2M6.3 10.3h1.2" stroke="#7a7876" stroke-width="1.1"/></svg>
<div class="t" style="left:1193.5px;top:442px;font-size:10.2px;letter-spacing:-0.48px;color:#3b3a39;">All Sel Sales</div>
<div class="r" style="left:1162.3px;top:465.8px;width:9.5px;height:9.5px;background:#fff;border:1px solid #a19f9d;border-radius:1.5px;"></div>
<div class="t" style="left:1193.5px;top:461px;font-size:10.7px;letter-spacing:-0.49px;color:#3b3a39;">Category</div>
<div class="r" style="left:1162.3px;top:485.8px;width:9.5px;height:9.5px;background:#fff;border:1px solid #a19f9d;border-radius:1.5px;"></div>
<div class="t" style="left:1193.5px;top:482px;font-size:10.4px;letter-spacing:-0.47px;color:#3b3a39;">City</div>
<div class="r" style="left:1162.3px;top:505.8px;width:9.5px;height:9.5px;background:#fff;border:1px solid #a19f9d;border-radius:1.5px;"></div>
<svg class="r" style="left:1178.5px;top:503.9px;" width="9.5" height="13" viewBox="0 0 9.5 13"><path d="M0.6 0.6h8.3v11.8h-8.3z M2 2.3h5.5v2h-5.5z" fill="none" stroke="#605e5c" stroke-width="1.1"/><path d="M2.1 6.3h1.2M4.2 6.3h1.2M6.3 6.3h1.2M2.1 8.3h1.2M4.2 8.3h1.2M6.3 8.3h1.2M2.1 10.3h1.2M4.2 10.3h1.2M6.3 10.3h1.2" stroke="#7a7876" stroke-width="1.1"/></svg>
<div class="t" style="left:1193.5px;top:502px;font-size:10.1px;letter-spacing:-0.47px;color:#3b3a39;">CostPriceHasO...</div>
<div class="r" style="left:1162.3px;top:525.8px;width:9.5px;height:9.5px;background:#fff;border:1px solid #a19f9d;border-radius:1.5px;"></div>
<div class="t" style="left:1193.5px;top:521px;font-size:10.7px;letter-spacing:-0.41px;color:#3b3a39;">Country</div>
<div class="r" style="left:1162.3px;top:545.8px;width:9.5px;height:9.5px;background:#fff;border:1px solid #a19f9d;border-radius:1.5px;"></div>
<div class="t" style="left:1193.5px;top:541px;font-size:10.6px;letter-spacing:-0.45px;color:#3b3a39;">Customer ID</div>
<div class="r" style="left:1162.3px;top:565.8px;width:9.5px;height:9.5px;background:#fff;border:1px solid #a19f9d;border-radius:1.5px;"></div>
<div class="t" style="left:1193.5px;top:561px;font-size:10.6px;letter-spacing:-0.47px;color:#3b3a39;">Customer Name</div>
<div class="r" style="left:1162.3px;top:585.8px;width:9.5px;height:9.5px;background:#fff;border:1px solid #a19f9d;border-radius:1.5px;"></div>
<div class="t" style="left:1193.5px;top:581px;font-size:10.7px;letter-spacing:-0.45px;color:#3b3a39;">Discount</div>
<div class="r" style="left:1162.3px;top:605.8px;width:9.5px;height:9.5px;background:#fff;border:1px solid #a19f9d;border-radius:1.5px;"></div>
<div class="t" style="left:1193.5px;top:601px;font-size:10.7px;letter-spacing:-0.34px;color:#3b3a39;">Market</div>
<div class="r" style="left:1162.3px;top:625.8px;width:9.5px;height:9.5px;background:#fff;border:1px solid #a19f9d;border-radius:1.5px;"></div>
<svg class="r" style="left:1178.5px;top:623.9px;" width="9.5" height="13" viewBox="0 0 9.5 13"><path d="M0.6 0.6h8.3v11.8h-8.3z M2 2.3h5.5v2h-5.5z" fill="none" stroke="#605e5c" stroke-width="1.1"/><path d="M2.1 6.3h1.2M4.2 6.3h1.2M6.3 6.3h1.2M2.1 8.3h1.2M4.2 8.3h1.2M6.3 8.3h1.2M2.1 10.3h1.2M4.2 10.3h1.2M6.3 10.3h1.2" stroke="#7a7876" stroke-width="1.1"/></svg>
<div class="t" style="left:1193.5px;top:622px;font-size:10.3px;letter-spacing:-0.41px;color:#3b3a39;">MAX</div>
<div class="r" style="left:1162.3px;top:645.8px;width:9.5px;height:9.5px;background:#fff;border:1px solid #a19f9d;border-radius:1.5px;"></div>
<svg class="r" style="left:1178.5px;top:643.9px;" width="9.5" height="13" viewBox="0 0 9.5 13"><path d="M0.6 0.6h8.3v11.8h-8.3z M2 2.3h5.5v2h-5.5z" fill="none" stroke="#605e5c" stroke-width="1.1"/><path d="M2.1 6.3h1.2M4.2 6.3h1.2M6.3 6.3h1.2M2.1 8.3h1.2M4.2 8.3h1.2M6.3 8.3h1.2M2.1 10.3h1.2M4.2 10.3h1.2M6.3 10.3h1.2" stroke="#7a7876" stroke-width="1.1"/></svg>
<div class="t" style="left:1193.5px;top:641px;font-size:10.6px;letter-spacing:-0.47px;color:#3b3a39;">max values regi...</div>
<!-- sec_bottom -->
<div class="r" style="left:34px;top:637px;width:777px;height:30px;background:#f3f2f1;"></div>
<div class="r" style="left:34px;top:666.6px;width:1246px;height:0.8px;background:#e6e4e2;"></div>
<svg class="r" style="left:39.4px;top:648.5px;" width="3.5" height="6" viewBox="0 0 3.5 6"><path d="M3.5 0L0 3L3.5 6z" fill="#c8c6c4"/></svg>
<svg class="r" style="left:57.2px;top:648.5px;" width="3.5" height="6" viewBox="0 0 3.5 6"><path d="M0 0L3.5 3L0 6z" fill="#c8c6c4"/></svg>
<div class="r" style="left:67.3px;top:637px;width:63px;height:29.6px;background:#ffffff;"></div>
<div class="r" style="left:67.3px;top:663.4px;width:63px;height:3.2px;background:#f2c811;"></div>
<div class="t" style="left:84.6px;top:642px;font-size:10.1px;letter-spacing:-0.79px;font-weight:700;color:#252423;">Page 1</div>
<div class="r" style="left:224.9px;top:639px;width:1px;height:26px;background:#dddbd9;"></div>
<div class="r" style="left:323.6px;top:639px;width:1px;height:26px;background:#dddbd9;"></div>
<div class="r" style="left:444.7px;top:639px;width:1px;height:26px;background:#dddbd9;"></div>
<div class="r" style="left:541.1px;top:639px;width:1px;height:26px;background:#dddbd9;"></div>
<div class="t" style="left:147.3px;top:641px;font-size:10.5px;letter-spacing:-0.49px;color:#484644;">SelectedValue</div>
<div class="t" style="left:242.8px;top:641px;font-size:10.7px;letter-spacing:-0.43px;color:#484644;">All, AllSelected</div>
<div class="t" style="left:341.9px;top:642px;font-size:10.3px;letter-spacing:-0.47px;color:#484644;">MAX, MAXX, MAXA</div>
<div class="t" style="left:462.0px;top:642px;font-size:10.1px;letter-spacing:-0.64px;color:#484644;">RANKX, RANK</div>
<div class="t" style="left:558.4px;top:642px;font-size:10.2px;letter-spacing:-0.46px;color:#484644;">HasOneValue</div>
<div class="r" style="left:634.3px;top:639px;width:32.6px;height:25.7px;background:#f2c811;"></div>
<div class="r" style="left:646.2px;top:651px;width:9px;height:2px;background:#605e5c;"></div>
<div class="r" style="left:649.7px;top:647.5px;width:2px;height:9px;background:#605e5c;"></div>
<div class="t" style="left:4.3px;top:667px;font-size:10.5px;letter-spacing:-0.49px;color:#605e5c;">Page 1 of 6</div>
<div class="r" style="left:1096.5px;top:676.8px;width:3.2px;height:1px;background:#484644;"></div>
<div class="r" style="left:1103.6px;top:676.7px;width:82.3px;height:1px;background:#8a8886;"></div>
<div class="r" style="left:1131.5px;top:672.7px;width:3.2px;height:9.3px;background:#484644;"></div>
<div class="r" style="left:1145.2px;top:674.5px;width:1px;height:5px;background:#605e5c;"></div>
<div class="r" style="left:1192px;top:676.7px;width:6px;height:1px;background:#484644;"></div>
<div class="r" style="left:1194.5px;top:674.2px;width:1px;height:6px;background:#484644;"></div>
<div class="t" style="left:1212.8px;top:668px;font-size:10.1px;letter-spacing:-0.85px;color:#605e5c;">73%</div>
<svg class="r" style="left:1252.4px;top:673px;" width="14" height="10" viewBox="0 0 14 10"><rect x="0.6" y="0.6" width="12.8" height="8.8" fill="none" stroke="#484644" stroke-width="1.1"/><path d="M3 4V2.8h1.6 M9.4 2.8H11V4 M3 6v1.2h1.6 M9.4 7.2H11V6" fill="none" stroke="#484644" stroke-width="0.9"/></svg>
<div class="r" style="left:0px;top:686px;width:1280px;height:34px;background:#1c1c1c;"></div>
<div class="r" style="left:0px;top:686px;width:1280px;height:1px;background:#0e0e0e;"></div>
<div class="r" style="left:1257px;top:685.3px;width:23px;height:1px;background:#8fc3ea;"></div>
<svg class="r" style="left:13px;top:696.3px;" width="14" height="14" viewBox="0 0 14 14"><path d="M0 2L5.7 1.2V6.6H0z M6.5 1.1L14 0V6.6H6.5z M0 7.4H5.7V12.8L0 12z M6.5 7.4H14V14L6.5 12.9z" fill="#ffffff"/></svg>
<div class="r" style="left:40px;top:687px;width:286.7px;height:33px;background:#f3f3f3;"></div>
<svg class="r" style="left:49.5px;top:697px;" width="15" height="14" viewBox="0 0 15 14"><circle cx="9" cy="5.3" r="4.4" fill="none" stroke="#222" stroke-width="1.3"/><path d="M5.8 8.5L0.8 13.3" stroke="#222" stroke-width="1.5" fill="none"/></svg>
<div class="t" style="left:73.8px;top:694px;font-size:13px;letter-spacing:-0.37px;color:#2b2b2b;">Type here to search</div>
<svg class="r" style="left:271px;top:690px;" width="48" height="26" viewBox="0 0 48 26"><circle cx="3" cy="19.5" r="1.4" fill="#3bb6e8"/><circle cx="8.5" cy="12.5" r="1.2" fill="#f0b429"/><path d="M41 6.5l1.2 2.6 2.6 1.2-2.6 1.2-1.2 2.6-1.2-2.6-2.6-1.2 2.6-1.2z" fill="#c25fd6"/><circle cx="23" cy="8" r="5.6" fill="#f6a623"/><path d="M12 25c0-7 4.5-10.5 11-10.5s9 2.5 10 6L30 25z" fill="#f29a1f"/><circle cx="30.5" cy="17.5" r="4.6" fill="#bfe6fb" stroke="#2f63d6" stroke-width="1.8"/><path d="M33.8 21l4.8 4.6" stroke="#2438b0" stroke-width="2.6" stroke-linecap="round"/></svg>
<div class="r" style="left:339.6px;top:697.2px;width:13px;height:13px;border:2px solid #fff;border-radius:50%;"></div>
<svg class="r" style="left:379.5px;top:697px;" width="14" height="12" viewBox="0 0 14 12"><path d="M0.700 0v11.500 M9 0v11.500 M0.700 2.700h8.300 M0.700 8.800h8.300" fill="none" stroke="#fff" stroke-width="1.300"/><path d="M12.700 0v11.500" stroke="#fff" stroke-width="1.100"/><rect x="11.900" y="5" width="1.700" height="1.500" fill="#fff"/></svg>
<svg class="r" style="left:419px;top:694.3px;" width="20" height="17" viewBox="0 0 20 17"><path d="M1 4.5h17.5v9.8a2.2 2.2 0 0 1-2.2 2.2H3.2A2.2 2.2 0 0 1 1 14.3z" fill="#f4f4f4"/><path d="M6 4.5V3a2 2 0 0 1 2-2h3.5a2 2 0 0 1 2 2v1.5" fill="none" stroke="#2b9fe0" stroke-width="1.400"/><rect x="6" y="7" width="3.3" height="3.3" fill="#f25022"/><rect x="10.2" y="7" width="3.3" height="3.3" fill="#7fba00"/><rect x="6" y="11" width="3.3" height="3.3" fill="#00a4ef"/><rect x="10.2" y="11" width="3.3" height="3.3" fill="#ffb900"/></svg>
<svg class="r" style="left:459.5px;top:693.3px;" width="18.5" height="18" viewBox="0 0 18.5 18"><path d="M9.2 1L16.8 5.2V12.8L9.2 17L1.6 12.8V5.2z" fill="none" stroke="#f0f0f0" stroke-width="1.4"/><path d="M9.2 5L12.8 7V11L9.2 13L5.6 11V7z M5.6 7L9.2 9L12.8 7 M9.2 9v4" fill="none" stroke="#f0f0f0" stroke-width="1.1"/></svg>
<svg class="r" style="left:499px;top:694.3px;" width="19.5" height="15.5" viewBox="0 0 19.5 15.5"><path d="M0.5 2a1 1 0 0 1 1-1h5.2l1.8 2h9.5a1 1 0 0 1 1 1v2H0.5z" fill="#e8a317"/><path d="M0.5 5h18.5v9.5a1 1 0 0 1-1 1h-16.5a1 1 0 0 1-1-1z" fill="#fcd35b"/><path d="M5.5 15.5v-5h8.5v5h-2.3v-2.7h-3.9v2.7z" fill="#3a8ee6"/></svg>
<svg class="r" style="left:539px;top:692.8px;" width="20.5" height="20.5" viewBox="0 0 20.5 20.5"><defs><linearGradient id="eg" x1="0" y1="0" x2="1" y2="1"><stop offset="0" stop-color="#35c1f1"/><stop offset="0.55" stop-color="#1b7fd4"/><stop offset="1" stop-color="#0c59a4"/></linearGradient></defs><circle cx="10.2" cy="10.2" r="10" fill="url(#eg)"/><path d="M9 0.500C15 -0.500 20.600 4.500 20.200 11H9.500C9.800 8.500 12.500 8 13.600 9.200C13.500 6 11 4 8 4.200C10 2.500 9.500 1.500 9 0.500z" fill="#4fd36a" opacity="0.900"/><path d="M8 11.5c0 4 3.5 6.5 8 5.2c-2 3-7 4-10.5 1.2C3 15.800 3.400 11.800 8 11.500z" fill="#0b4f9c"/></svg>
<svg class="r" style="left:578.5px;top:693.8px;" width="21.5" height="19" viewBox="0 0 21.5 19"><rect x="6" y="0.5" width="14" height="13" rx="1" fill="#1a8fe0"/><rect x="6" y="0.500" width="7" height="6.500" fill="#0a64b4"/><rect x="13" y="7" width="7" height="6.500" fill="#35b0f0"/><rect x="0.500" y="3.500" width="10" height="10" rx="1" fill="#0f6cbd"/><circle cx="5.500" cy="8.500" r="2.500" fill="none" stroke="#fff" stroke-width="1.400"/><path d="M9 10.500h12.500v7.500a1 1 0 0 1-1 1h-10.500a1 1 0 0 1-1-1z" fill="#f2b872"/><path d="M9 10.500l6.200 4.500l6.300-4.500" fill="none" stroke="#fbe0bd" stroke-width="1.100"/></svg>
<svg class="r" style="left:618px;top:693.3px;" width="21.5" height="19.5" viewBox="0 0 21.5 19.5"><circle cx="16.300" cy="4.200" r="2.400" fill="#6a72d9"/><circle cx="10.800" cy="3.300" r="3.100" fill="#7b83eb"/><path d="M13.500 7.500h7a1 1 0 0 1 1 1v5a3.500 3.500 0 0 1-7 0z" fill="#5059c9"/><path d="M6 7.500h10v7a5 5 0 0 1-10 0z" fill="#7b83eb"/><rect x="0.500" y="4.500" width="10" height="10" rx="1" fill="#4b53bc"/><path d="M3 7.200h5M5.500 7.200v5" stroke="#fff" stroke-width="1.300"/><circle cx="16.300" cy="15" r="4" fill="#7ec050" stroke="#1c1c1c" stroke-width="0.800"/><path d="M14.400 15l1.400 1.400l2.500-2.700" fill="none" stroke="#fff" stroke-width="1.100"/></svg>
<svg class="r" style="left:659px;top:693.3px;" width="21.5" height="19.5" viewBox="0 0 21.5 19.5"><circle cx="9" cy="8.500" r="8" fill="#16a8ee"/><circle cx="4.500" cy="4" r="3.800" fill="#16a8ee"/><circle cx="13.200" cy="13" r="3.800" fill="#16a8ee"/><path d="M11.800 6.200C11 4.700 6.200 4.600 6.200 7.200c0 2.500 5.800 1.300 5.800 3.900c0 2.500-5 2.300-6.200 0.400" fill="none" stroke="#fff" stroke-width="1.700" stroke-linecap="round"/><circle cx="16.300" cy="15" r="4" fill="#7ec050" stroke="#1c1c1c" stroke-width="0.800"/><path d="M14.400 15l1.400 1.400l2.500-2.700" fill="none" stroke="#fff" stroke-width="1.100"/></svg>
<svg class="r" style="left:698.8px;top:693.3px;" width="19.5" height="19.5" viewBox="0 0 19.5 19.5"><circle cx="9.750" cy="9.750" r="9.500" fill="#fbbc05"/><path d="M9.750 9.750L1.520 5A9.500 9.500 0 0 1 17.980 5z" fill="#ea4335"/><path d="M9.750 9.750L1.520 5A9.500 9.500 0 0 0 9.750 19.250L13.900 12.100z" fill="#34a853"/><path d="M9.750 5h8.230A9.500 9.500 0 0 1 9.750 19.250z" fill="#fbbc05"/><circle cx="9.750" cy="9.750" r="4.400" fill="#fff"/><circle cx="9.750" cy="9.750" r="3.500" fill="#4285f4"/></svg>
<svg class="r" style="left:739px;top:695.3px;" width="19" height="14" viewBox="0 0 19 14"><rect x="0" y="0" width="19" height="11.300" fill="#2f86d6"/><rect x="0.800" y="0.800" width="17.400" height="9.700" fill="#3b9ae8"/><rect x="7" y="11.300" width="5" height="1.500" fill="#7a8896"/><rect x="5" y="12.600" width="9" height="1" fill="#9aa7b4"/></svg>
<svg class="r" style="left:777.7px;top:694.3px;" width="20.5" height="18" viewBox="0 0 20.5 18"><rect x="5.500" y="0.500" width="14.500" height="17" rx="1" fill="#41a5ee"/><rect x="5.500" y="4.800" width="14.500" height="4.300" fill="#2b7cd3"/><rect x="5.500" y="9.100" width="14.500" height="4.300" fill="#185abd"/><rect x="5.500" y="13.400" width="14.500" height="4.100" fill="#103f91"/><rect x="0.500" y="4" width="10" height="10" rx="1" fill="#185abd"/><path d="M2.500 6.500l1.400 5l1.600-5l1.600 5l1.400-5" fill="none" stroke="#fff" stroke-width="1.100"/></svg>
<div class="r" style="left:809px;top:687px;width:40px;height:33px;background:#2e2e2e;"></div>
<svg class="r" style="left:821.4px;top:693.8px;" width="15.5" height="18" viewBox="0 0 15.5 18"><rect x="9.500" y="0" width="6" height="20" rx="0.800" fill="#e3a41c"/><rect x="13.500" y="0" width="2" height="20" fill="#cf8f14"/><rect x="4.500" y="5.500" width="6" height="14.500" rx="0.800" fill="#f1c02e"/><rect x="0" y="11" width="5.500" height="9" rx="0.800" fill="#f7da56"/></svg>
<svg class="r" style="left:859.4px;top:693.3px;" width="19.5" height="19.5" viewBox="0 0 19.5 19.5"><path d="M9.750 0.500L19 5v9.500L9.750 19L0.500 14.500V5z" fill="#17b890"/><path d="M9.750 0.500L19 5L9.750 9.500L0.500 5z" fill="#3fdcb0"/><path d="M9.750 9.500V19L19 14.500V5z" fill="#0e9a78"/><path d="M5.500 8.500h8.500M9.750 8.500v7.500" stroke="#fff" stroke-width="2.200"/></svg>
<svg class="r" style="left:898.5px;top:692.8px;" width="21" height="20" viewBox="0 0 21 20"><path d="M9 4C3.500 4 0.500 8 0.500 11.500C0.500 15.500 4 18 8 18c1.500 0 2-1 1.500-2.200c-0.700-1.800 0.700-2.800 2.500-2.800h2.500c2.500 0 3.500-1.800 3.500-3.600C18 6 14 4 9 4z" fill="#d8ecfa" stroke="#7aa7cc" stroke-width="0.600"/><circle cx="4.500" cy="10" r="1.500" fill="#e74c3c"/><circle cx="7.500" cy="7" r="1.500" fill="#f1c40f"/><circle cx="11.500" cy="6.800" r="1.500" fill="#2ecc71"/><circle cx="5.500" cy="14" r="1.500" fill="#3498db"/><path d="M12 13L19.500 1.500l1 0.700L14 14z" fill="#d98e3a"/><path d="M12 13l2 1l-1.200 2.300c-0.800 0.600-1.800 0-1.700-0.900z" fill="#8e5a2b"/></svg>
<div class="r" style="left:493.2px;top:718px;width:23.8px;height:2px;background:#76b9ed;"></div>
<div class="r" style="left:518px;top:718px;width:6px;height:2px;background:#76b9ed;"></div>
<div class="r" style="left:532.5px;top:718px;width:31.9px;height:2px;background:#76b9ed;"></div>
<div class="r" style="left:572.8px;top:718px;width:31.9px;height:2px;background:#76b9ed;"></div>
<div class="r" style="left:613px;top:718px;width:32px;height:2px;background:#76b9ed;"></div>
<div class="r" style="left:652.8px;top:718px;width:32.6px;height:2px;background:#76b9ed;"></div>
<div class="r" style="left:692.8px;top:718px;width:32.2px;height:2px;background:#76b9ed;"></div>
<div class="r" style="left:733px;top:718px;width:32.3px;height:2px;background:#76b9ed;"></div>
<div class="r" style="left:773.4px;top:718px;width:31.2px;height:2px;background:#76b9ed;"></div>
<div class="r" style="left:809px;top:718px;width:40px;height:2px;background:#76b9ed;"></div>
<div class="r" style="left:852.7px;top:718px;width:32.6px;height:2px;background:#76b9ed;"></div>
<div class="r" style="left:893px;top:718px;width:31.6px;height:2px;background:#76b9ed;"></div>
<svg class="r" style="left:950.5px;top:696px;" width="19" height="17" viewBox="0 0 19 17"><path d="M4.500 11.500a3.800 3.800 0 0 1 0.500-7.500a5.500 5.500 0 0 1 10.300 1.200a3.200 3.200 0 0 1-0.300 6.300z" fill="#e8eef5"/><path d="M11.500 11.200c1.300 1.800 2 2.800 2 3.700a2 2 0 0 1-4 0c0-0.900 0.700-1.900 2-3.700z" fill="#2f9cf4"/></svg>
<div class="t" style="left:976.6px;top:695px;font-size:12.3px;letter-spacing:-0.76px;color:#ffffff;">30°C</div>
<svg class="r" style="left:1019px;top:700.3px;" width="12" height="7" viewBox="0 0 12 7"><path d="M0.800 6.200L6 1L11.200 6.200" fill="none" stroke="#fff" stroke-width="1.300"/></svg>
<svg class="r" style="left:1044px;top:697.3px;" width="14.5" height="13.5" viewBox="0 0 14.5 13.5"><rect x="0" y="0" width="14.500" height="13.500" fill="#2d2d2d"/><path d="M2.500 11.500L4 2.500L8.500 4.500M2.500 11.500h9.500l-1.500-4" fill="none" stroke="#6ad400" stroke-width="1.400"/></svg>
<svg class="r" style="left:1070.5px;top:698px;" width="15" height="13" viewBox="0 0 15 13"><path d="M3.500 8.500a2.800 2.800 0 0 1 0.400-5.500a4 4 0 0 1 7.600 0.900a2.400 2.400 0 0 1-0.200 4.600z" fill="#d0d0d0"/><circle cx="10.800" cy="9" r="3.600" fill="#e81123"/><path d="M9.300 7.500l3 3M12.300 7.500l-3 3" stroke="#fff" stroke-width="1"/></svg>
<svg class="r" style="left:1097.9px;top:700px;" width="14.5" height="8.5" viewBox="0 0 14.5 8.5"><rect x="0.600" y="0.600" width="11.800" height="7.300" rx="1" fill="none" stroke="#fff" stroke-width="1.100"/><rect x="2" y="2" width="6" height="4.500" fill="#fff"/><rect x="12.800" y="2.800" width="1.300" height="3" fill="#fff"/></svg>
<svg class="r" style="left:1126px;top:698px;" width="14" height="12.5" viewBox="0 0 14 12.5"><path d="M1 12A11 11 0 0 1 12.500 1" fill="none" stroke="#888" stroke-width="1.100"/><path d="M4 12A8 8 0 0 1 12.500 4" fill="none" stroke="#fff" stroke-width="1.100"/><path d="M7 12A5 5 0 0 1 12.500 7" fill="none" stroke="#fff" stroke-width="1.100"/><path d="M10 12A2.300 2.300 0 0 1 12.500 9.800V12z" fill="#fff"/></svg>
<div class="t" style="left:1150.0px;top:693px;font-size:10.9px;letter-spacing:-0.85px;color:#ffffff;">ENG</div>
<div class="t" style="left:1193.3px;top:686px;font-size:10.9px;letter-spacing:-0.85px;color:#ffffff;">14:23</div>
<div class="t" style="left:1179.9px;top:701px;font-size:10.9px;letter-spacing:-0.56px;color:#ffffff;">29-08-2022</div>
<svg class="r" style="left:1245.7px;top:696.5px;" width="14.5" height="12" viewBox="0 0 14.5 12"><path d="M0.600 0.600h13.300v8.500h-8l-2.800 2.500v-2.500h-2.500z" fill="#fff"/><path d="M3 3h8.500M3 5h8.500M3 7h5" stroke="#1c1c1c" stroke-width="0.800"/></svg>
<div class="r" style="left:1253.6px;top:704.5px;width:11px;height:11px;background:#1c1c1c;border:1px solid #fff;border-radius:50%;"></div>
<div class="t" style="left:1256.6px;top:700px;font-size:9px;color:#fff;">7</div>
<!-- sec_top -->
<div class="r" style="left:0px;top:0px;width:1280px;height:28px;background:#3b3a38;"></div>
<div class="r" style="left:0px;top:28px;width:1280px;height:105px;background:#f3f2f1;"></div>
<div class="r" style="left:0px;top:28px;width:1280px;height:1px;background:#8d8c8a;"></div>
<svg class="r" style="left:13px;top:8px;" width="15" height="15" viewBox="0 0 15 15"><path d="M1.5 1.5h10l2 2v10h-12z M4 1.5v4.5h6.5v-4.5 M4 13.5v-4.5h7v4.5" fill="none" stroke="#d2d0ce" stroke-width="1.3"/></svg>
<svg class="r" style="left:39px;top:8px;" width="14" height="14" viewBox="0 0 14 14"><path d="M1.5 1v5.5h5.5 M1.8 6.2 C4 2.5 9 1.5 11.3 4.3 C13.5 7 11.5 10 6 13.5" fill="none" stroke="#e6e4e2" stroke-width="1.3"/></svg>
<svg class="r" style="left:64px;top:8px;" width="14" height="14" viewBox="0 0 14 14"><path d="M12.5 1v5.5h-5.5 M12.2 6.2 C10 2.5 5 1.5 2.7 4.3 C0.5 7 2.5 10 8 13.5" fill="none" stroke="#7a7876" stroke-width="1.3"/></svg>
<div class="t" style="left:131.5px;top:6px;font-size:10.9px;letter-spacing:-0.46px;color:#ffffff;">Sample data for blog - Power BI Desktop</div>
<div class="r" style="left:435px;top:4px;width:390px;height:20px;background:#cccac8;border-radius:2px;"></div>
<svg class="r" style="left:448px;top:7px;" width="15" height="14" viewBox="0 0 15 14"><circle cx="9" cy="5.5" r="4.3" fill="none" stroke="#3b3a39" stroke-width="1.2"/><path d="M6 8.7L1 13.5" stroke="#3b3a39" stroke-width="1.3" fill="none"/></svg>
<div class="t" style="left:472.5px;top:5px;font-size:12.3px;letter-spacing:-0.85px;color:#3a4763;">Search</div>
<div class="t" style="left:1085.0px;top:4px;font-size:10.9px;letter-spacing:-0.53px;color:#ffffff;">Aniket Raut</div>
<div class="r" style="left:1143.7px;top:7.5px;width:13.5px;height:13.5px;background:#f3f2f1;border-radius:50%;"></div>
<div class="r" style="left:1184px;top:15.3px;width:9.5px;height:1.2px;background:#ffffff;"></div>
<svg class="r" style="left:1220px;top:10px;" width="11" height="11" viewBox="0 0 11 11"><path d="M1 3.5h6.5v6.5h-6.5z M3 3.5v-2h6.5v6.5h-2" fill="none" stroke="#fff" stroke-width="1.1"/></svg>
<svg class="r" style="left:1257px;top:10.5px;" width="10" height="10" viewBox="0 0 10 10"><path d="M0.7 0.7L9 9 M9 0.7L0.7 9" fill="none" stroke="#fff" stroke-width="1.2"/></svg>
<div class="t" style="left:19.0px;top:32px;font-size:11.8px;letter-spacing:-0.50px;color:#323130;">File</div>
<div class="t" style="left:67.0px;top:32px;font-size:12.1px;letter-spacing:-0.37px;font-weight:700;color:#252423;">Home</div>
<div class="r" style="left:67px;top:52px;width:32.5px;height:2.2px;background:#f2c811;"></div>
<div class="t" style="left:125.0px;top:32px;font-size:12.5px;letter-spacing:-0.35px;color:#323130;">Insert</div>
<div class="t" style="left:181.0px;top:32px;font-size:12.5px;letter-spacing:-0.25px;color:#323130;">Modeling</div>
<div class="t" style="left:256.5px;top:32px;font-size:12px;letter-spacing:-0.43px;color:#323130;">View</div>
<div class="t" style="left:307.0px;top:32px;font-size:12.1px;letter-spacing:-0.46px;color:#323130;">Help</div>
<div class="t" style="left:358.0px;top:32px;font-size:12.1px;letter-spacing:-0.48px;color:#323130;">External Tools</div>
<div class="r" style="left:441px;top:29px;width:64px;height:24.7px;background:#ffffff;"></div>
<div class="t" style="left:454.5px;top:32px;font-size:11.8px;letter-spacing:-0.50px;font-weight:700;color:#8f7024;">Format</div>
<div class="r" style="left:508px;top:29px;width:83px;height:24.7px;background:#ffffff;"></div>
<div class="t" style="left:520.7px;top:32px;font-size:12.4px;letter-spacing:-0.39px;font-weight:700;color:#8f7024;">Data / Drill</div>
<div class="r" style="left:133px;top:59px;width:1px;height:72px;background:#d8d6d4;"></div>
<div class="r" style="left:420.5px;top:59px;width:1px;height:72px;background:#d8d6d4;"></div>
<div class="r" style="left:518.2px;top:59px;width:1px;height:72px;background:#d8d6d4;"></div>
<div class="r" style="left:640.5px;top:59px;width:1px;height:72px;background:#d8d6d4;"></div>
<div class="r" style="left:736.5px;top:59px;width:1px;height:72px;background:#d8d6d4;"></div>
<div class="r" style="left:798.2px;top:59px;width:1px;height:72px;background:#d8d6d4;"></div>
<div class="r" style="left:847px;top:59px;width:1px;height:72px;background:#d8d6d4;"></div>
<div class="t" style="left:12.0px;top:86px;font-size:10.4px;letter-spacing:-0.85px;color:#484644;">Paste</div>
<div class="t" style="left:60.0px;top:59px;font-size:10.4px;letter-spacing:-0.59px;color:#484644;">Cut</div>
<div class="t" style="left:60.0px;top:79px;font-size:10.4px;letter-spacing:-0.59px;color:#484644;">Copy</div>
<div class="t" style="left:60.0px;top:98px;font-size:10.9px;letter-spacing:-0.49px;color:#484644;">Format painter</div>
<div class="t" style="left:48.7px;top:118px;font-size:9.2px;letter-spacing:-0.46px;color:#605e5c;">Clipboard</div>
<div class="t" style="left:149.2px;top:86px;font-size:10.4px;letter-spacing:-0.63px;color:#484644;">Get</div>
<div class="t" style="left:143.2px;top:98px;font-size:10.7px;letter-spacing:-0.44px;color:#484644;">data</div>
<svg class="r" style="left:164.75px;top:106px;" width="7" height="5" viewBox="0 0 7 5"><path d="M0.8 0.8L3.5 3.6L6.2 0.8" fill="none" stroke="#484644" stroke-width="1.4"/></svg>
<div class="t" style="left:186.5px;top:86px;font-size:10.4px;letter-spacing:-0.85px;color:#484644;">Excel</div>
<div class="t" style="left:175.7px;top:98px;font-size:11px;letter-spacing:-0.48px;color:#484644;">workbook</div>
<div class="t" style="left:227.8px;top:86px;font-size:10.4px;letter-spacing:-0.82px;color:#484644;">Data</div>
<div class="t" style="left:225.2px;top:99px;font-size:10.4px;letter-spacing:-0.43px;color:#484644;">hub</div>
<svg class="r" style="left:243.75px;top:106px;" width="7" height="5" viewBox="0 0 7 5"><path d="M0.8 0.8L3.5 3.6L6.2 0.8" fill="none" stroke="#484644" stroke-width="1.4"/></svg>
<div class="t" style="left:261.4px;top:86px;font-size:10.4px;letter-spacing:-0.85px;color:#484644;">SQL</div>
<div class="t" style="left:257.2px;top:99px;font-size:10.4px;letter-spacing:-0.63px;color:#484644;">Server</div>
<div class="t" style="left:293.2px;top:86px;font-size:10.4px;letter-spacing:-0.59px;color:#484644;">Enter</div>
<div class="t" style="left:295.1px;top:99px;font-size:10.4px;letter-spacing:-0.51px;color:#484644;">data</div>
<div class="t" style="left:323.0px;top:86px;font-size:10.4px;letter-spacing:-0.55px;color:#484644;">Dataverse</div>
<div class="t" style="left:376.2px;top:86px;font-size:10.4px;letter-spacing:-0.69px;color:#484644;">Recent</div>
<div class="t" style="left:370.8px;top:99px;font-size:10.4px;letter-spacing:-0.65px;color:#484644;">sources</div>
<svg class="r" style="left:405.25px;top:106px;" width="7" height="5" viewBox="0 0 7 5"><path d="M0.8 0.8L3.5 3.6L6.2 0.8" fill="none" stroke="#484644" stroke-width="1.4"/></svg>
<div class="t" style="left:269.0px;top:118px;font-size:9px;letter-spacing:-0.67px;color:#605e5c;">Data</div>
<div class="t" style="left:430.8px;top:86px;font-size:10.4px;letter-spacing:-0.47px;color:#484644;">Transform</div>
<div class="t" style="left:438.6px;top:98px;font-size:10.7px;letter-spacing:-0.44px;color:#484644;">data</div>
<svg class="r" style="left:460.15px;top:106px;" width="7" height="5" viewBox="0 0 7 5"><path d="M0.8 0.8L3.5 3.6L6.2 0.8" fill="none" stroke="#484644" stroke-width="1.4"/></svg>
<div class="t" style="left:477.4px;top:86px;font-size:10.4px;letter-spacing:-0.65px;color:#484644;">Refresh</div>
<div class="t" style="left:456.0px;top:118px;font-size:9px;letter-spacing:-0.59px;color:#605e5c;">Queries</div>
<div class="t" style="left:532.2px;top:86px;font-size:10.4px;letter-spacing:-0.65px;color:#484644;">New</div>
<div class="t" style="left:530.0px;top:99px;font-size:10.4px;letter-spacing:-0.52px;color:#484644;">visual</div>
<div class="t" style="left:566.5px;top:85px;font-size:10.6px;letter-spacing:-0.48px;color:#484644;">Text</div>
<div class="t" style="left:567.8px;top:99px;font-size:10.4px;letter-spacing:-0.63px;color:#484644;">box</div>
<div class="t" style="left:602.2px;top:85px;font-size:10.7px;letter-spacing:-0.46px;color:#484644;">More</div>
<div class="t" style="left:595.5px;top:99px;font-size:10.4px;letter-spacing:-0.55px;color:#484644;">visuals</div>
<svg class="r" style="left:625.95px;top:106px;" width="7" height="5" viewBox="0 0 7 5"><path d="M0.8 0.8L3.5 3.6L6.2 0.8" fill="none" stroke="#484644" stroke-width="1.4"/></svg>
<div class="t" style="left:569.8px;top:118px;font-size:9.1px;letter-spacing:-0.45px;color:#605e5c;">Insert</div>
<div class="t" style="left:659.2px;top:86px;font-size:10.4px;letter-spacing:-0.65px;color:#484644;">New</div>
<div class="t" style="left:650.6px;top:99px;font-size:10.4px;letter-spacing:-0.63px;color:#484644;">measure</div>
<div class="t" style="left:697.5px;top:85px;font-size:10.5px;letter-spacing:-0.46px;color:#484644;">Quick</div>
<div class="t" style="left:691.9px;top:99px;font-size:10.4px;letter-spacing:-0.69px;color:#484644;">measure</div>
<div class="t" style="left:667.5px;top:118px;font-size:9px;letter-spacing:-0.46px;color:#605e5c;">Calculations</div>
<div class="t" style="left:746.0px;top:85px;font-size:10.8px;letter-spacing:-0.46px;color:#a19f9d;">Sensitivity</div>
<svg class="r" style="left:764.5px;top:107px;" width="7" height="5" viewBox="0 0 7 5"><path d="M0.8 0.8L3.5 3.6L6.2 0.8" fill="none" stroke="#a19f9d" stroke-width="1.1"/></svg>
<div class="t" style="left:749.8px;top:118px;font-size:9.2px;letter-spacing:-0.49px;color:#605e5c;">Sensitivity</div>
<div class="t" style="left:807.5px;top:85px;font-size:10.5px;letter-spacing:-0.49px;color:#484644;">Publish</div>
<div class="t" style="left:812.9px;top:118px;font-size:9px;letter-spacing:-0.85px;color:#605e5c;">Share</div>
<svg class="r" style="left:1268.5px;top:123.5px;" width="8" height="5.5" viewBox="0 0 8 5.5"><path d="M0.8 4.8L4 1.4L7.2 4.8" fill="none" stroke="#252423" stroke-width="1.5"/></svg>
<div class="r" style="left:0px;top:133px;width:1280px;height:3px;background:linear-gradient(rgba(0,0,0,0.10),rgba(0,0,0,0.03) 60%,rgba(0,0,0,0));"></div>
<div class="r" style="left:0px;top:133px;width:2.2px;height:33.5px;background:#f2c811;"></div>
<!-- sec_icons -->
<svg class="r" style="left:0;top:0" width="1280" height="140" viewBox="0 0 1280 140"><rect x="14.8" y="65" width="16.6" height="20" fill="#fdfdfd" stroke="#e8a33d" stroke-width="1.6"/><path d="M18 68v-2.800h3a2.300 2.300 0 0 1 4.600 0h3v2.800z" fill="#fdfdfd" stroke="#8a8886" stroke-width="1.100"/><rect x="25.500" y="72" width="11" height="14.300" fill="#fdfdfd" stroke="#605e5c" stroke-width="1.300"/><path d="M47.500 62.300L52 71.600 M52.500 62.300L48 71.600" stroke="#323130" stroke-width="1.100" fill="none"/><circle cx="47.500" cy="73.500" r="1.700" fill="none" stroke="#2b88d8" stroke-width="1.100"/><circle cx="52.500" cy="73.500" r="1.700" fill="none" stroke="#2b88d8" stroke-width="1.100"/><path d="M48 82.500h-4.500v10.800h4.500" fill="none" stroke="#605e5c" stroke-width="1.100"/><path d="M48.500 84.300h4.500l3.500 3.500v6.900h-8z" fill="#fdfdfd" stroke="#605e5c" stroke-width="1.100"/><path d="M53 84.300v3.500h3.500 M50.500 90h4 M50.500 92.300h4" fill="none" stroke="#605e5c" stroke-width="0.900"/><path d="M43.600 108.500L51 104.800L54.300 110L48.800 114.300z" fill="#f7c98a" stroke="#e8892b" stroke-width="1.100" stroke-linejoin="round"/><path d="M50.300 104.300l1.800-1.700l2.500 0.600l1.200 3l-1.500 2z" fill="#fdfdfd" stroke="#484644" stroke-width="1"/><path d="M53.500 103l2.300-1l0.800 1.600l-1.500 1.400" fill="none" stroke="#484644" stroke-width="1"/><path d="M148.600 64.500v17.300c0 4 16.800 4 16.800 0v-17.300" fill="#fafafa" stroke="#605e5c" stroke-width="1.200"/><ellipse cx="157" cy="64.500" rx="8.400" ry="3" fill="#fafafa" stroke="#605e5c" stroke-width="1.200"/><rect x="157.500" y="73.500" width="13" height="12.600" fill="#fff" stroke="#605e5c" stroke-width="1.100"/><rect x="157.500" y="73.500" width="13" height="2.600" fill="#605e5c"/><path d="M157.500 79.500h13 M157.500 82.800h13 M161.800 76v10 M166.200 76v10" stroke="#a19f9d" stroke-width="0.900" fill="none"/><path d="M190 61.8h10.7l6.5 6.5v16h-17.2z" fill="#fafafa" stroke="#a19f9d" stroke-width="1.2" stroke-linejoin="round"/><path d="M200.7 61.8v6.5h6.5" fill="none" stroke="#a19f9d" stroke-width="1.1"/><rect x="199.700" y="75" width="11.500" height="11.400" rx="0.800" fill="#107c41"/><path d="M202.800 77.700l5.300 6 M208.100 77.700l-5.300 6" stroke="#fff" stroke-width="1.300"/><rect x="226.600" y="62" width="23.200" height="22.300" fill="#fafafa" stroke="#605e5c" stroke-width="1.300"/><rect x="227.200" y="63.200" width="22" height="2.200" fill="#a19f9d"/><path d="M240.3 74.2v9.8a5.3 2.2 0 0 0 10.6 0v-9.8" fill="#fff" stroke="#4f9fdc" stroke-width="1.2"/><ellipse cx="245.6" cy="74.2" rx="5.3" ry="2.2" fill="#fff" stroke="#4f9fdc" stroke-width="1.2"/><path d="M262.5 61.8h10.5l6.5 6.5v16h-17z" fill="#fafafa" stroke="#605e5c" stroke-width="1.2" stroke-linejoin="round"/><path d="M273 61.8v6.5h6.5" fill="none" stroke="#605e5c" stroke-width="1.1"/><path d="M274 74.2v9.8a5.3 2.2 0 0 0 10.6 0v-9.8" fill="#fff" stroke="#e39a4e" stroke-width="1.2"/><ellipse cx="279.3" cy="74.2" rx="5.3" ry="2.2" fill="#fff" stroke="#e39a4e" stroke-width="1.2"/><rect x="293.400" y="62" width="22.600" height="22.500" fill="#fafafa" stroke="#605e5c" stroke-width="1.300"/><rect x="300" y="62.700" width="15.500" height="2.300" fill="#605e5c"/><path d="M293.400 72.200h22.600 M293.400 78h22.600 M300.700 66v18.500 M308.600 66v18.500" stroke="#a19f9d" stroke-width="0.900" fill="none"/><rect x="290.500" y="60" width="11" height="10.500" fill="#f3f2f1"/><path d="M291.300 66h12.300 M297.500 59.800v12.300" stroke="#3f9c52" stroke-width="1.400" fill="none"/><ellipse cx="341" cy="75" rx="9.300" ry="6.800" transform="rotate(-38 341 75)" fill="none" stroke="#605e5c" stroke-width="1.200"/><ellipse cx="348.500" cy="71.300" rx="9.300" ry="6.800" transform="rotate(-38 348.500 71.300)" fill="none" stroke="#605e5c" stroke-width="1.200"/><circle cx="344.700" cy="73.200" r="3.600" fill="none" stroke="#605e5c" stroke-width="1.200"/><path d="M382.5 61.8h10.5l6.5 6.5v16h-17z" fill="#fafafa" stroke="#605e5c" stroke-width="1.2" stroke-linejoin="round"/><path d="M393 61.8v6.5h6.5" fill="none" stroke="#605e5c" stroke-width="1.1"/><circle cx="398.200" cy="80.300" r="5.800" fill="#fff" stroke="#3a96dd" stroke-width="1.300"/><path d="M398.200 77v3.600h3" fill="none" stroke="#323130" stroke-width="1"/><rect x="441" y="62" width="23.300" height="22.500" fill="#fafafa" stroke="#605e5c" stroke-width="1.300"/><rect x="441.600" y="63" width="22" height="2.300" fill="#605e5c"/><path d="M441 71.500h23 M441 77.800h23 M448.700 66v18.500 M456.300 66v18.500" stroke="#a19f9d" stroke-width="0.900" fill="none"/><path d="M449.50 86.30 L454.63 84.31 L466.65 71.90 L463.35 68.70 L451.33 81.11 Z" fill="#fff" stroke="#2b88d8" stroke-width="1.1" stroke-linejoin="round"/><path d="M454.63 84.31 L451.33 81.11 M464.56 74.06 L461.26 70.85" stroke="#2b88d8" stroke-width="0.9" fill="none"/><path d="M449.50 86.30 L452.07 85.30 L450.41 83.70 Z" fill="#2b88d8"/><path d="M485.3 61.8h10.3l6.5 6.5v16h-16.8z" fill="#fafafa" stroke="#605e5c" stroke-width="1.2" stroke-linejoin="round"/><path d="M495.6 61.8v6.5h6.5" fill="none" stroke="#605e5c" stroke-width="1.1"/><circle cx="501" cy="80.500" r="6.500" fill="#f3f2f1"/><path d="M496.200 79.500a5 5 0 0 1 9-2 M505.800 81.500a5 5 0 0 1-9 2" fill="none" stroke="#3f9c52" stroke-width="1.400"/><path d="M505.600 74.300v3.600h-3.600 M496.400 86.700v-3.600h3.600" fill="none" stroke="#3f9c52" stroke-width="1.300"/><rect x="546" y="66.500" width="6" height="17.500" fill="#c8c6c4" stroke="#a19f9d" stroke-width="1"/><rect x="539.300" y="62.500" width="6.500" height="21.500" fill="#fafafa" stroke="#605e5c" stroke-width="1.200"/><rect x="532.500" y="71.300" width="6.500" height="12.700" fill="#6cb0ec" stroke="#2b7cd3" stroke-width="1.200"/><path d="M543.600 80.700h12.300 M549.800 74.500v12.300" stroke="#3f9c52" stroke-width="1.400" fill="none"/><rect x="564" y="63.800" width="24" height="18.600" fill="#fafafa" stroke="#605e5c" stroke-width="1.300"/><circle cx="564" cy="63.8" r="1.400" fill="#2b88d8"/><circle cx="588" cy="63.8" r="1.400" fill="#2b88d8"/><circle cx="564" cy="82.4" r="1.400" fill="#2b88d8"/><circle cx="588" cy="82.4" r="1.400" fill="#2b88d8"/><path d="M572.300 78l3.700-10l3.700 10 M573.500 74.800h5" fill="none" stroke="#2b88d8" stroke-width="1.200"/><path d="M603.500 84v-13h6.500 M610 84v-21.500h7v21.500 M617 66.800h6.500v17.200 M603.500 84h20" fill="none" stroke="#605e5c" stroke-width="1.200"/><path d="M610.50 86.30 L615.68 84.44 L628.41 71.94 L625.19 68.66 L612.46 81.16 Z" fill="#fff" stroke="#2b88d8" stroke-width="1.1" stroke-linejoin="round"/><path d="M615.68 84.44 L612.46 81.16 M626.27 74.04 L623.05 70.76" stroke="#2b88d8" stroke-width="0.9" fill="none"/><path d="M610.50 86.30 L613.09 85.37 L611.48 83.73 Z" fill="#2b88d8"/><rect x="661" y="61.800" width="16" height="22.700" fill="#fdfdfd" stroke="#605e5c" stroke-width="1.300"/><rect x="663.7" y="64.300" width="10.600" height="3.400" fill="#6cb0ec" stroke="#2b7cd3" stroke-width="0.900"/><rect x="664" y="70.1" width="2.200" height="2.200" fill="#323130"/><rect x="664" y="74.9" width="2.200" height="2.200" fill="#323130"/><rect x="664" y="79.7" width="2.200" height="2.200" fill="#323130"/><rect x="668.1" y="70.1" width="2.200" height="2.200" fill="#323130"/><rect x="668.1" y="74.9" width="2.200" height="2.200" fill="#323130"/><rect x="668.1" y="79.7" width="2.200" height="2.200" fill="#323130"/><rect x="672.2" y="70.1" width="2.200" height="2.200" fill="#323130"/><rect x="672.2" y="74.9" width="2.200" height="2.200" fill="#323130"/><rect x="672.2" y="79.7" width="2.200" height="2.200" fill="#323130"/><rect x="701.7" y="61.800" width="16" height="22.700" fill="#fdfdfd" stroke="#605e5c" stroke-width="1.300"/><rect x="704.4" y="64.300" width="10.600" height="3.400" fill="#c8c6c4" stroke="#8a8886" stroke-width="0.900"/><rect x="704.7" y="70.1" width="2.200" height="2.200" fill="#323130"/><rect x="704.7" y="74.9" width="2.200" height="2.200" fill="#323130"/><rect x="704.7" y="79.7" width="2.200" height="2.200" fill="#323130"/><rect x="708.8" y="70.1" width="2.200" height="2.200" fill="#323130"/><rect x="708.8" y="74.9" width="2.200" height="2.200" fill="#323130"/><rect x="708.8" y="79.7" width="2.200" height="2.200" fill="#323130"/><rect x="712.9" y="70.1" width="2.200" height="2.200" fill="#323130"/><rect x="712.9" y="74.9" width="2.200" height="2.200" fill="#323130"/><rect x="712.9" y="79.7" width="2.200" height="2.200" fill="#323130"/><path d="M702 60.300h5.300l-2.600 5.500h3l-7.500 10.500l1.800-7.200h-3z" fill="#fbb040" stroke="#e0821e" stroke-width="0.900" stroke-linejoin="round"/><rect x="759.300" y="61.800" width="17" height="22.800" fill="#f6f6f6" stroke="#b5d4ec" stroke-width="1.200"/><g transform="rotate(45 774.500 66.500)"><rect x="767.500" y="64.300" width="14" height="4.400" fill="#a9cdee" stroke="#f3f2f1" stroke-width="0.600"/><rect x="772" y="58.800" width="5" height="5.500" fill="#f3f2f1" stroke="#b5d4ec" stroke-width="1"/></g><g transform="rotate(45 767.500 74)"><rect x="761" y="71.300" width="13" height="5.400" rx="1" fill="#f6f6f6" stroke="#b5d4ec" stroke-width="1"/><path d="M763.500 74h8" stroke="#b5d4ec" stroke-width="1"/></g><path d="M822.500 68v-3.800a2.500 2.500 0 0 1 2.500-2.500h4.200a2.500 2.500 0 0 1 2.500 2.500v7.300" fill="none" stroke="#484644" stroke-width="1.200"/><path d="M818.200 75.500v-4.700a2.500 2.500 0 0 1 2.500-2.500h4.200a2.500 2.500 0 0 1 2.500 2.500v13.200" fill="none" stroke="#484644" stroke-width="1.200"/><rect x="814.800" y="75.700" width="7.500" height="8.300" rx="1.800" fill="#f3f2f1" stroke="#484644" stroke-width="1.200"/><path d="M822.300 84h6" stroke="#484644" stroke-width="1.200"/><path d="M831.300 86.500v-12 M826.800 78.800l4.500-4.600l4.500 4.600" fill="none" stroke="#2b88d8" stroke-width="1.300"/></svg>
<!-- sec_vizicons -->
<div class="r" style="left:1032.7px;top:320.7px;width:20px;height:19.7px;background:#d2d0ce;border:1px solid #a6a6a6;"></div>
<svg class="r" style="left:987.6px;top:229px;" width="15.6" height="15.6" viewBox="0 0 16 16"><path d="M0.6 0v15.400h15.400" fill="none" stroke="#484644" stroke-width="1.200"/><rect x="1.2" y="2" width="3.5" height="4.2" fill="#ffffff" stroke="#8a8886" stroke-width="0.7"/><rect x="4.7" y="2" width="6.3" height="4.2" fill="#74b5ee" stroke="#2b88d8" stroke-width="0.9"/><rect x="1.2" y="9" width="6" height="4.2" fill="#ffffff" stroke="#8a8886" stroke-width="0.7"/><rect x="7.2" y="9" width="7.3" height="4.2" fill="#c8c6c4" stroke="#a19f9d" stroke-width="0.9"/></svg>
<svg class="r" style="left:1011px;top:229px;" width="15.6" height="15.6" viewBox="0 0 16 16"><path d="M0.6 0v15.400h15.400" fill="none" stroke="#484644" stroke-width="1.200"/><rect x="3.5" y="4.5" width="4" height="6.5" fill="#74b5ee" stroke="#2b88d8" stroke-width="0.9"/><rect x="3.5" y="11" width="4" height="4" fill="#ffffff" stroke="#8a8886" stroke-width="0.7"/><rect x="10.5" y="2" width="4" height="8.5" fill="#c8c6c4" stroke="#a19f9d" stroke-width="0.9"/><rect x="10.5" y="10.5" width="4" height="4.5" fill="#ffffff" stroke="#8a8886" stroke-width="0.7"/></svg>
<svg class="r" style="left:1034.7px;top:229px;" width="15.6" height="15.6" viewBox="0 0 16 16"><path d="M0.600 0v15.400h15.400" fill="none" stroke="#484644" stroke-width="1.200"/><rect x="1.2" y="0.8" width="14.3" height="3.4" fill="#74b5ee" stroke="#2b88d8" stroke-width="0.9"/><rect x="1.2" y="6" width="6.5" height="3.2" fill="#c8c6c4" stroke="#a19f9d" stroke-width="0.9"/><rect x="1.2" y="10.8" width="10" height="3.2" fill="#ffffff" stroke="#8a8886" stroke-width="0.8"/></svg>
<svg class="r" style="left:1058px;top:229px;" width="15.6" height="15.6" viewBox="0 0 16 16"><path d="M0.6 0v15.400h15.400" fill="none" stroke="#484644" stroke-width="1.200"/><rect x="1.5" y="0.8" width="3.6" height="14.2" fill="#74b5ee" stroke="#2b88d8" stroke-width="0.9"/><rect x="7.2" y="8" width="3" height="7" fill="#c8c6c4" stroke="#a19f9d" stroke-width="0.9"/><rect x="10.4" y="4" width="3.8" height="11" fill="#ffffff" stroke="#8a8886" stroke-width="0.8"/></svg>
<svg class="r" style="left:1081px;top:229px;" width="15.6" height="15.6" viewBox="0 0 16 16"><path d="M0.6 0v15.400h15.400" fill="none" stroke="#484644" stroke-width="1.200"/><rect x="1.2" y="2" width="3" height="4.2" fill="#ffffff" stroke="#8a8886" stroke-width="0.7"/><rect x="4.2" y="2" width="10.3" height="4.2" fill="#74b5ee" stroke="#2b88d8" stroke-width="0.9"/><rect x="1.2" y="9" width="8" height="4.2" fill="#ffffff" stroke="#8a8886" stroke-width="0.7"/><rect x="9.2" y="9" width="5.3" height="4.2" fill="#c8c6c4" stroke="#a19f9d" stroke-width="0.9"/></svg>
<svg class="r" style="left:1104.4px;top:229px;" width="15.6" height="15.6" viewBox="0 0 16 16"><path d="M0.6 0v15.400h15.400" fill="none" stroke="#484644" stroke-width="1.200"/><rect x="3" y="2" width="4.3" height="9.5" fill="#74b5ee" stroke="#2b88d8" stroke-width="0.9"/><rect x="3" y="11.5" width="4.3" height="3.5" fill="#ffffff" stroke="#8a8886" stroke-width="0.7"/><rect x="10.3" y="2" width="4.3" height="4" fill="#c8c6c4" stroke="#a19f9d" stroke-width="0.9"/><rect x="10.3" y="6" width="4.3" height="9" fill="#ffffff" stroke="#8a8886" stroke-width="0.7"/></svg>
<svg class="r" style="left:987.6px;top:252.7px;" width="15.6" height="15.6" viewBox="0 0 16 16"><path d="M0.6 0v15.400h15.400" fill="none" stroke="#484644" stroke-width="1.200"/><path d="M1.200 12.500L10.500 3L15.300 8.500" fill="none" stroke="#2b88d8" stroke-width="1.100"/><path d="M1.200 10.500L6.500 4.500L10.500 8L15.300 3.500" fill="none" stroke="#484644" stroke-width="1.100"/></svg>
<svg class="r" style="left:1011px;top:252.7px;" width="15.6" height="15.6" viewBox="0 0 16 16"><path d="M9.500 8L13 0.800L15.600 7v8.400h-6z" fill="#c8c6c4" stroke="#a19f9d" stroke-width="0.700"/><path d="M0.400 15.400v-5.400L6.500 1.200L15.600 15.400z" fill="#fff" stroke="#484644" stroke-width="1.100" stroke-linejoin="round"/><path d="M0.400 15.400v-5.900l3.600 3.300l5-6.500l6.600 9.100z" fill="#74b5ee" stroke="#2b88d8" stroke-width="0.900" stroke-linejoin="round"/></svg>
<svg class="r" style="left:1034.7px;top:252.7px;" width="15.6" height="15.6" viewBox="0 0 16 16"><path d="M0.6 0v15.400h15.400" fill="none" stroke="#484644" stroke-width="1.200"/><path d="M1.200 2.500L6 8L10.500 2.500L15.400 5.500v6L10.500 8.500L6 13L1.200 7.500z" fill="#74b5ee" stroke="#2b88d8" stroke-width="0.900" stroke-linejoin="round"/></svg>
<svg class="r" style="left:1058px;top:252.7px;" width="15.6" height="15.6" viewBox="0 0 16 16"><path d="M0.6 0v15.400h15.400" fill="none" stroke="#484644" stroke-width="1.200"/><rect x="3" y="1.8" width="3.8" height="8.5" fill="#74b5ee" stroke="#2b88d8" stroke-width="0.9"/><rect x="3" y="10.3" width="3.8" height="4.7" fill="#ffffff" stroke="#8a8886" stroke-width="0.7"/><rect x="10" y="1.8" width="3.8" height="8" fill="#c8c6c4" stroke="#a19f9d" stroke-width="0.9"/><rect x="10" y="9.8" width="3.8" height="5.2" fill="#ffffff" stroke="#8a8886" stroke-width="0.7"/><path d="M0.800 13.500L6.500 8.500L9.500 11L15 5.500" fill="none" stroke="#484644" stroke-width="1.100"/></svg>
<svg class="r" style="left:1081px;top:252.7px;" width="15.6" height="15.6" viewBox="0 0 16 16"><path d="M0.6 0v15.400h15.400" fill="none" stroke="#484644" stroke-width="1.200"/><rect x="2.8" y="6.5" width="3.5" height="8.5" fill="#74b5ee" stroke="#2b88d8" stroke-width="0.9"/><rect x="7.5" y="1.5" width="3" height="13.5" fill="#ffffff" stroke="#8a8886" stroke-width="0.8"/><rect x="11" y="4.5" width="3" height="10.5" fill="#c8c6c4" stroke="#a19f9d" stroke-width="0.9"/><path d="M0.800 14L7 8L10 10.500L15.200 5" fill="none" stroke="#484644" stroke-width="1.100"/></svg>
<svg class="r" style="left:1104.4px;top:252.7px;" width="15.6" height="15.6" viewBox="0 0 16 16"><path d="M0.6 0v15.400h15.400" fill="none" stroke="#484644" stroke-width="1.200"/><path d="M1.200 1.500c3 0 4.500 3.500 7 3.500s4-3.500 7.200-3.500v3.500c-3 0-4.500 3.500-7.200 3.500s-4-3.500-7-3.500z" fill="#c8c6c4" stroke="#8a8886" stroke-width="0.600"/><path d="M1.200 5.500c3 0 4.500 5 7 5s4-5 7.200-5v3.500c-3 0-4.500 5-7.200 5s-4-5-7-5z" fill="#74b5ee" stroke="#2b88d8" stroke-width="0.700"/><path d="M1.200 9.500c2.500 0 3.500-1 5-1M10.500 8.500c1.500 0 2.500 1 5 1v3c-3 0-4-1-5-1M6.200 11.500c-1.500 0-2.500 1-5 1z" fill="#f2a33a" stroke="#e08a1c" stroke-width="0.600"/></svg>
<svg class="r" style="left:987.6px;top:276px;" width="15.6" height="15.6" viewBox="0 0 16 16"><path d="M0.6 0v15.400h15.400" fill="none" stroke="#484644" stroke-width="1.200"/><rect x="1.8" y="4.5" width="3" height="10.5" fill="#c8c6c4" stroke="#8a8886" stroke-width="0.7"/><rect x="4.8" y="6" width="3" height="9" fill="#ffffff" stroke="#8a8886" stroke-width="0.7"/><rect x="8" y="1.2" width="2.5" height="8" fill="#2b88d8" stroke="#2b88d8" stroke-width="0.5"/><rect x="10.5" y="1.2" width="3.5" height="14" fill="#ffffff" stroke="#8a8886" stroke-width="0.8"/></svg>
<svg class="r" style="left:1011px;top:276px;" width="15.6" height="15.6" viewBox="0 0 16 16"><rect x="0.5" y="1" width="15" height="4.2" fill="#74b5ee" stroke="#2b88d8" stroke-width="0.9"/><rect x="2.5" y="5.7" width="11" height="4.2" fill="#74b5ee" stroke="#2b88d8" stroke-width="0.9"/><rect x="5.3" y="10.4" width="5.4" height="4.2" fill="#74b5ee" stroke="#2b88d8" stroke-width="0.9"/></svg>
<svg class="r" style="left:1034.7px;top:276px;" width="15.6" height="15.6" viewBox="0 0 16 16"><path d="M0.6 0v15.400h15.400" fill="none" stroke="#484644" stroke-width="1.200"/><rect x="3" y="3.2" width="2.4" height="2.4" fill="#74b5ee"/><rect x="7" y="6.4" width="2.4" height="2.4" fill="#74b5ee"/><rect x="11" y="9.6" width="2.4" height="2.4" fill="#74b5ee"/><rect x="11.5" y="1.2" width="2.8" height="2.8" fill="#252423"/><rect x="2.8" y="10.8" width="2.8" height="2.8" fill="#252423"/></svg>
<svg class="r" style="left:1058px;top:276px;" width="15.6" height="15.6" viewBox="0 0 16 16"><circle cx="8" cy="8" r="7.300" fill="#fdfdfd" stroke="#484644" stroke-width="1.100"/><path d="M8 8V0.700A7.300 7.300 0 0 1 13.600 12.700z" fill="#74b5ee" stroke="#2b88d8" stroke-width="0.900" stroke-linejoin="round"/></svg>
<svg class="r" style="left:1081px;top:276px;" width="15.6" height="15.6" viewBox="0 0 16 16"><circle cx="8" cy="8" r="5.500" fill="none" stroke="#74b5ee" stroke-width="4"/><path d="M8 2.500A5.500 5.500 0 0 0 2.500 8" fill="none" stroke="#fdfdfd" stroke-width="3"/><path d="M8 0.600A7.400 7.400 0 0 0 0.600 8h3.800A3.600 3.600 0 0 1 8 4.400z" fill="none" stroke="#8a8886" stroke-width="0.700"/></svg>
<svg class="r" style="left:1104.4px;top:276px;" width="15.6" height="15.6" viewBox="0 0 16 16"><rect x="0.5" y="0.5" width="7" height="7.3" fill="#74b5ee" stroke="#2b88d8" stroke-width="0.9"/><rect x="0.5" y="7.8" width="7" height="7.3" fill="#74b5ee" stroke="#2b88d8" stroke-width="0.9"/><rect x="7.5" y="0.5" width="8" height="4.5" fill="#ffffff" stroke="#8a8886" stroke-width="0.9"/><rect x="7.5" y="5" width="4" height="5" fill="#ffffff" stroke="#8a8886" stroke-width="0.9"/><rect x="11.5" y="5" width="4" height="5" fill="#ffffff" stroke="#8a8886" stroke-width="0.9"/><rect x="7.5" y="10" width="4" height="5.1" fill="#ffffff" stroke="#8a8886" stroke-width="0.9"/><rect x="11.5" y="10" width="4" height="5.1" fill="#ffffff" stroke="#8a8886" stroke-width="0.9"/></svg>
<svg class="r" style="left:987.6px;top:299px;" width="15.6" height="15.6" viewBox="0 0 16 16"><circle cx="8" cy="6.800" r="5.600" fill="#fdfdfd" stroke="#484644" stroke-width="1.200"/><path d="M5 4.500c1-1.500 2.500-2 3.500-1.500l-0.500 2l1.500 0.500l-1 2l-2-0.500l-0.500 2l-1.500-1.500z M10 7l2-0.500l0.500 2l-1.500 1.500l-1.500-1z" fill="#1e9e4a"/><path d="M3 2a7.500 7.500 0 0 0 0.500 10.500" fill="none" stroke="#484644" stroke-width="1.100"/><path d="M8 12.500v2 M4 15.200h8" stroke="#484644" stroke-width="1.300" fill="none"/></svg>
<svg class="r" style="left:1011px;top:299px;" width="15.6" height="15.6" viewBox="0 0 16 16"><path d="M6.500 3.500h3l2-2h4.300v6h-8.800z M0.800 7.500h8.200l-1.500 3.500l-0.500 3.500l-4-1.500l-2.200-3z" fill="#c8c6c4" stroke="#7a7876" stroke-width="0.900" stroke-linejoin="round"/><path d="M0.500 1h4.500l1.500 2.500l0.500 4h-6.200l1-3z M9 7.500h6.800l-0.300 2.500l-2.500 3l-3 1l-1-0.500l-2 1l0.500-3.500z" fill="#74b5ee" stroke="#2b88d8" stroke-width="0.900" stroke-linejoin="round"/></svg>
<svg class="r" style="left:1034.7px;top:299px;" width="15.6" height="15.6" viewBox="0 0 16 16"><path d="M1 11.500A7 7 0 0 1 15 11.500h-3.500A3.500 3.500 0 0 0 4.500 11.500z" fill="#fdfdfd" stroke="#484644" stroke-width="1.100" stroke-linejoin="round"/><path d="M5.500 5.200A7 7 0 0 1 15 11.500h-3.500A3.500 3.500 0 0 0 7.500 8.200z" fill="#2b88d8" stroke="#2b88d8" stroke-width="0.800"/><path d="M7.500 11.300L11 6.800" stroke="#484644" stroke-width="1.400"/></svg>
<svg class="r" style="left:1058px;top:299px;" width="15.6" height="15.6" viewBox="0 0 16 16"><rect x="0.6" y="2.5" width="14.8" height="11" fill="#fdfdfd" stroke="#605e5c" stroke-width="1.1"/><text x="8" y="10.800" font-size="7.500" text-anchor="middle" fill="#74b5ee" font-family="Liberation Sans, sans-serif" letter-spacing="-0.300">123</text><path d="M1.500 12h13" stroke="#c8c6c4" stroke-width="0.800"/></svg>
<svg class="r" style="left:1081px;top:299px;" width="15.6" height="15.6" viewBox="0 0 16 16"><rect x="0.6" y="0.6" width="14.8" height="14.8" fill="#fdfdfd" stroke="#605e5c" stroke-width="1.1"/><rect x="2.2" y="2.2" width="11.6" height="11.6" fill="none" stroke="#a19f9d" stroke-width="0.6"/><path d="M3.800 3v10" stroke="#605e5c" stroke-width="0.900"/><path d="M5 4.500h7.500M5 8h5.500M5 11.500h7" stroke="#2b88d8" stroke-width="1.300"/><path d="M5 6h4M5 9.500h3" stroke="#a19f9d" stroke-width="0.700"/></svg>
<svg class="r" style="left:1104.4px;top:299px;" width="15.6" height="15.6" viewBox="0 0 16 16"><rect x="0.6" y="1.5" width="14.8" height="12.5" fill="#fdfdfd" stroke="#605e5c" stroke-width="1.1"/><path d="M2.800 8.500l2.500-4.500l2.500 4.500z" fill="#2aa05a"/><path d="M8.800 4l2.500 4.500l2.500-4.500z" fill="#e0393e"/><path d="M1.800 10.800h12.400" stroke="#c8c6c4" stroke-width="1.200"/></svg>
<svg class="r" style="left:987.6px;top:322.3px;" width="15.6" height="15.6" viewBox="0 0 16 16"><rect x="0.6" y="0.6" width="14.2" height="14.2" fill="#fdfdfd" stroke="#605e5c" stroke-width="1.1"/><path d="M0.600 3.500h14.200" stroke="#605e5c" stroke-width="1"/><rect x="3.5" y="6" width="2.2" height="2.2" fill="none" stroke="#605e5c" stroke-width="0.8"/><rect x="3.5" y="10.3" width="2.2" height="2.2" fill="none" stroke="#605e5c" stroke-width="0.8"/><path d="M7.800 6.800h8l-3 3.500v4.800h-2v-4.800z" fill="#fdfdfd" stroke="#484644" stroke-width="1" stroke-linejoin="round"/></svg>
<svg class="r" style="left:1011px;top:322.3px;" width="15.6" height="15.6" viewBox="0 0 16 16"><rect x="0.6" y="0.6" width="14.8" height="14.6" fill="#fdfdfd" stroke="#605e5c" stroke-width="1.1"/><path d="M0.600 3.200h14.800" stroke="#605e5c" stroke-width="1.400"/><path d="M0.600 7h14.800M0.600 11h14.800M5.500 3.500v11.500M10.500 3.500v11.500" stroke="#a19f9d" stroke-width="0.900"/></svg>
<svg class="r" style="left:1034.7px;top:322.3px;" width="15.6" height="15.6" viewBox="0 0 16 16"><rect x="0.6" y="0.6" width="14.8" height="14.6" fill="#fdfdfd" stroke="#605e5c" stroke-width="1.1"/><rect x="10.5" y="3.5" width="4.6" height="3.5" fill="#74b5ee"/><rect x="1" y="7.2" width="14" height="3.7" fill="#74b5ee"/><rect x="1" y="11" width="14" height="3.8" fill="#74b5ee"/><path d="M0.600 3.200h14.800" stroke="#484644" stroke-width="1.400"/><path d="M0.600 7h14.800M0.600 11h14.800M5.500 3.500v11.500M10.500 3.500v11.500" stroke="#fff" stroke-width="0.900"/><rect x="0.600" y="0.600" width="14.800" height="14.600" fill="none" stroke="#484644" stroke-width="1.100"/></svg>
<svg class="r" style="left:1058px;top:322.3px;" width="15.6" height="15.6" viewBox="0 0 16 16"><text x="8" y="13.800" font-size="14" font-weight="700" text-anchor="middle" fill="#2b88d8" font-family="Liberation Sans, sans-serif">R</text></svg>
<svg class="r" style="left:1081px;top:322.3px;" width="15.6" height="15.6" viewBox="0 0 16 16"><text x="8.200" y="11.800" font-size="13.500" font-weight="700" text-anchor="middle" fill="#2b88d8" font-family="Liberation Sans, sans-serif" letter-spacing="-0.500">Py</text></svg>
<svg class="r" style="left:1104.4px;top:322.3px;" width="15.6" height="15.6" viewBox="0 0 16 16"><path d="M0.6 0v15.400h15.400" fill="none" stroke="#484644" stroke-width="1.200"/><path d="M1 3.500h10.500" stroke="#2b88d8" stroke-width="1.200"/><circle cx="13" cy="3.500" r="1.900" fill="#fdfdfd" stroke="#2b88d8" stroke-width="1.100"/><path d="M1 7.500h8.500M1 11.200h6" stroke="#605e5c" stroke-width="1"/><path d="M8 6.300l1.800 1.200l-1.800 1.200z M4.800 10l1.800 1.200l-1.800 1.200z" fill="#605e5c"/></svg>
<svg class="r" style="left:987.6px;top:345.7px;" width="15.6" height="15.6" viewBox="0 0 16 16"><rect x="0.5" y="5.8" width="5" height="4.2" fill="#74b5ee" stroke="#2b88d8" stroke-width="0.9"/><rect x="9.5" y="0.8" width="6" height="3.8" fill="#74b5ee" stroke="#2b88d8" stroke-width="0.9"/><rect x="9.5" y="5.9" width="6" height="3.8" fill="#74b5ee" stroke="#2b88d8" stroke-width="0.9"/><rect x="9.5" y="11" width="6" height="3.8" fill="#74b5ee" stroke="#2b88d8" stroke-width="0.9"/><path d="M5.500 7.900h2.500M8 2.700v10.300M8 2.700h1.500M8 7.800h1.500M8 13h1.500" fill="none" stroke="#484644" stroke-width="1"/></svg>
<svg class="r" style="left:1011px;top:345.7px;" width="15.6" height="15.6" viewBox="0 0 16 16"><path d="M0.700 1.200h14.600v9.500h-9l-3.300 3.300v-3.300h-2.300z" fill="#fdfdfd" stroke="#2b88d8" stroke-width="1.200" stroke-linejoin="round"/></svg>
<svg class="r" style="left:1034.7px;top:345.7px;" width="15.6" height="15.6" viewBox="0 0 16 16"><path d="M2.500 0.700h8l3.500 3.500v11h-11.500z" fill="#fdfdfd" stroke="#484644" stroke-width="1.100" stroke-linejoin="round"/><path d="M10.500 0.700v3.500h3.500" fill="none" stroke="#484644" stroke-width="1"/><circle cx="2.500" cy="6" r="1.600" fill="#2b88d8"/><path d="M5 6.500h6.500M5 9.500h4" stroke="#2b88d8" stroke-width="1.100"/></svg>
<svg class="r" style="left:1058px;top:345.7px;" width="15.6" height="15.6" viewBox="0 0 16 16"><path d="M2 0.700h8l3.800 3.800v10.800h-11.800z" fill="#fdfdfd" stroke="#484644" stroke-width="1.200" stroke-linejoin="round"/><path d="M10 0.700v3.800h3.800" fill="none" stroke="#484644" stroke-width="1"/><path d="M4.700 13.500v-3.500M7.800 13.500v-2.200M10.900 13.500v-5.500" stroke="#323130" stroke-width="1.700"/></svg>
<svg class="r" style="left:1081px;top:345.7px;" width="15.6" height="15.6" viewBox="0 0 16 16"><path d="M6.500 1.300h8.700v7.200 M1.300 9.500v5.500h9.300" fill="none" stroke="#2b7cd3" stroke-width="1.800"/><path d="M6.300 14l1.200-3.500l1.500-1.500l0.500-2.500l2-1.500l0.500-2l2.300-0.800v2.800l-1.800 1.500l-0.500 2l-1.500 1l-0.500 2.500l-1 2z" fill="#74b5ee"/><path d="M1.500 0h2.600a1.200 1.200 0 0 1 1.200 1.200v5.300l-2.500 2.800l-2.500-2.800v-5.300a1.200 1.200 0 0 1 1.200-1.200z" fill="#e8710a"/><rect x="1.900" y="2.600" width="1.800" height="1.400" rx="0.500" fill="#fff"/><circle cx="13.600" cy="13.400" r="2.300" fill="#e8710a"/><circle cx="15.300" cy="9.300" r="1.200" fill="#e8710a"/></svg>
<svg class="r" style="left:1104.4px;top:345.7px;" width="15.6" height="15.6" viewBox="0 0 16 16"><path d="M0.300 8.100L6.300 0.900L12.200 8.100L6.300 15.300z M3.500 8.100L9.400 0.900L16 8.100L9.400 15.300z M6.450 4.500L12.700 11.700 M12.700 4.500L6.450 11.700" fill="none" stroke="#a855b5" stroke-width="1" stroke-linejoin="round"/></svg>
<svg class="r" style="left:987.6px;top:369.5px;" width="15.6" height="15.6" viewBox="0 0 16 16"><path d="M0.800 1h8.500l6 6.500l-6 6.500h-8.500l6-6.500z" fill="#fdfdfd" stroke="#2b88d8" stroke-width="1.200" stroke-linejoin="round"/><path d="M5 14l6-6.500M8.500 14l6-6.500" stroke="#2b88d8" stroke-width="0.900"/></svg>
<svg class="r" style="left:1011px;top:369.5px;" width="15.6" height="15.6" viewBox="0 0 16 16"><circle cx="3.500" cy="6.500" r="0.900" fill="#8a6f5a"/><circle cx="8.500" cy="6.500" r="0.900" fill="#8a6f5a"/><circle cx="13.500" cy="6.500" r="0.900" fill="#8a6f5a"/></svg>
</body></html>
